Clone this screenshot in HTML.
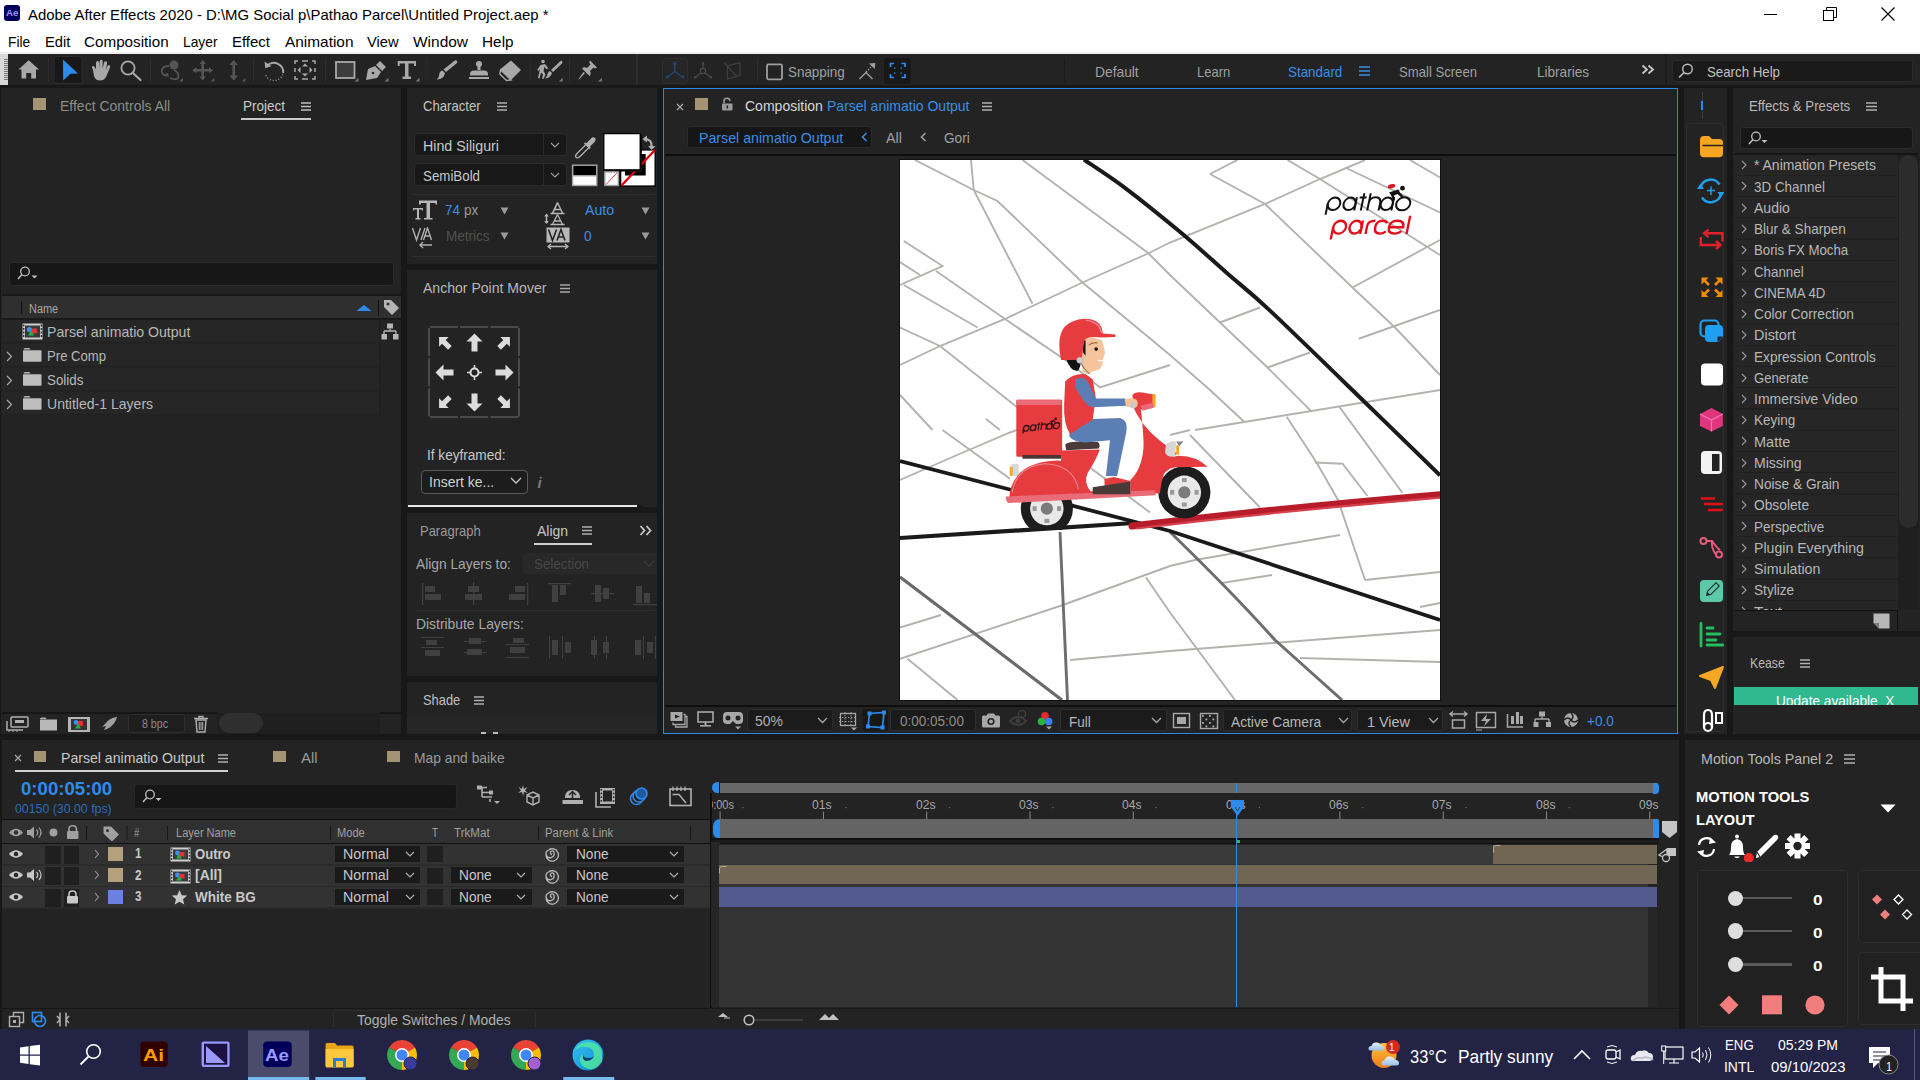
<!DOCTYPE html><html><head><meta charset="utf-8"><style>html,body{margin:0;padding:0;}body{width:1920px;height:1080px;position:relative;overflow:hidden;background:#181818;font-family:"Liberation Sans",sans-serif;}body>div,body>svg{position:absolute;}.t{white-space:nowrap;}</style></head><body>
<div style="left:0px;top:0px;width:1920px;height:54px;background:#ffffff;"></div>
<div style="left:0px;top:51.5px;width:1920px;height:2px;background:#f0f0f0;"></div>
<div style="left:4px;top:5px;width:16px;height:16px;background:#00005b;border-radius:3px;"></div>
<div class="t" style="left:5.5px;top:9.38px;font-size:9px;line-height:9px;color:#9999ff;font-weight:bold;transform:scaleX(1.0865);transform-origin:0 0;">Ae</div>
<div class="t" style="left:27.6px;top:7.10px;font-size:15px;line-height:15px;color:#000;transform:scaleX(0.9946);transform-origin:0 0;">Adobe After Effects 2020 - D:\MG Social p\Pathao Parcel\Untitled Project.aep *</div>
<div style="left:1764px;top:14px;width:13px;height:1px;background:#000;"></div>
<svg style="left:1820px;top:5px" width="18" height="18"><rect x="3.5" y="5.5" width="10" height="10" fill="none" stroke="#000" stroke-width="1"/><path d="M6.5 5.5V2.5h10v10h-3" fill="none" stroke="#000" stroke-width="1"/></svg>
<svg style="left:1880px;top:6px" width="16" height="16"><path d="M1.5 1.5l13 13M14.5 1.5l-13 13" stroke="#000" stroke-width="1.2"/></svg>
<div class="t" style="left:7.8px;top:35.23px;font-size:14.5px;line-height:14.5px;color:#000;transform:scaleX(0.9501);transform-origin:0 0;">File</div>
<div class="t" style="left:44.7px;top:35.23px;font-size:14.5px;line-height:14.5px;color:#000;transform:scaleX(1.0125);transform-origin:0 0;">Edit</div>
<div class="t" style="left:84px;top:35.23px;font-size:14.5px;line-height:14.5px;color:#000;transform:scaleX(1.0497);transform-origin:0 0;">Composition</div>
<div class="t" style="left:183px;top:35.23px;font-size:14.5px;line-height:14.5px;color:#000;transform:scaleX(0.9511);transform-origin:0 0;">Layer</div>
<div class="t" style="left:232px;top:35.23px;font-size:14.5px;line-height:14.5px;color:#000;transform:scaleX(1.0323);transform-origin:0 0;">Effect</div>
<div class="t" style="left:284.5px;top:35.23px;font-size:14.5px;line-height:14.5px;color:#000;transform:scaleX(1.0623);transform-origin:0 0;">Animation</div>
<div class="t" style="left:367px;top:35.23px;font-size:14.5px;line-height:14.5px;color:#000;transform:scaleX(1.0139);transform-origin:0 0;">View</div>
<div class="t" style="left:413px;top:35.23px;font-size:14.5px;line-height:14.5px;color:#000;transform:scaleX(1.0665);transform-origin:0 0;">Window</div>
<div class="t" style="left:482px;top:35.23px;font-size:14.5px;line-height:14.5px;color:#000;transform:scaleX(1.0596);transform-origin:0 0;">Help</div>
<div style="left:0px;top:54px;width:1920px;height:31px;background:#232323;"></div>
<svg style="left:0;top:54px" width="8" height="31"><rect width="8" height="31" fill="#d8d8d8"/><rect x="4" y="5" width="4" height="1" fill="#777"/><rect x="4" y="7" width="4" height="1" fill="#777"/><rect x="4" y="9" width="4" height="1" fill="#777"/><rect x="4" y="11" width="4" height="1" fill="#777"/><rect x="4" y="13" width="4" height="1" fill="#777"/><rect x="4" y="15" width="4" height="1" fill="#777"/><rect x="4" y="17" width="4" height="1" fill="#777"/><rect x="4" y="19" width="4" height="1" fill="#777"/><rect x="4" y="21" width="4" height="1" fill="#777"/><rect x="4" y="23" width="4" height="1" fill="#777"/><rect x="4" y="25" width="4" height="1" fill="#777"/></svg>
<svg style="left:0;top:54px" width="1000" height="31" viewBox="0 54 1000 31"><rect x="48" y="58" width="1" height="24" fill="#2c2c2c"/><rect x="150" y="58" width="1" height="24" fill="#2c2c2c"/><rect x="253" y="58" width="1" height="24" fill="#2c2c2c"/><rect x="325" y="58" width="1" height="24" fill="#2c2c2c"/><rect x="426.5" y="58" width="1" height="24" fill="#2c2c2c"/><rect x="529.6" y="58" width="1" height="24" fill="#2c2c2c"/><rect x="569" y="58" width="1" height="24" fill="#2c2c2c"/><rect x="757" y="58" width="1" height="24" fill="#2c2c2c"/><rect x="636" y="54" width="2" height="31" fill="#2e2e2e"/><rect x="54" y="56.5" width="28" height="27" rx="3" fill="#181818" stroke="#2c2c2c"/><path d="M63 59.5 L78 73.5 L70.5 73.8 L63.2 80.5Z" fill="#2d8ceb"/><path d="M28.7 60.2 L39 69.5 L36 69.5 L36 78.6 L31.2 78.6 L31.2 73 L26.2 73 L26.2 78.6 L21.5 78.6 L21.5 69.5 L18.5 69.5Z" fill="#a8a8a8"/><path d="M93 70 Q91 66 93 66 Q95 66 96 70 L96 63 Q96 61 97.5 61 Q99 61 99 63 L99 69 L99.5 61.5 Q100 59.5 101.5 59.8 Q103 60 102.8 62 L102.5 69 L104 62.5 Q104.5 61 106 61.3 Q107.5 61.8 107 63.5 L106 70 L107.5 66 Q108.5 64.5 109.8 65.5 Q110.5 66.5 109.8 68 L106 77 Q104 80.5 100 80.5 Q95.5 80.5 94 76Z" fill="#a8a8a8"/><circle cx="128" cy="68" r="6.6" fill="none" stroke="#a8a8a8" stroke-width="1.8"/><path d="M132.7 72.7 L140.5 80" stroke="#a8a8a8" stroke-width="2.2" stroke-linecap="round"/><circle cx="174" cy="65" r="4.5" fill="#555555"/><path d="M169 66 Q161 66 162 72 Q163 76 168 75.5 M174 70 Q180 73 178 78 Q176 80.5 170 78" fill="none" stroke="#555555" stroke-width="1.8"/><path d="M165 74 L169 77 L168 73Z" fill="#555555"/><path d="M179 81.6 L183 77.8 L183 81.6Z" fill="#555555"/><path d="M202.7 60 L206 64 L204 64 L204 69 L209 69 L209 67 L213 70.3 L209 73.6 L209 71.6 L204 71.6 L204 76.6 L206 76.6 L202.7 80.6 L199.4 76.6 L201.4 76.6 L201.4 71.6 L196.4 71.6 L196.4 73.6 L192.4 70.3 L196.4 67 L196.4 69 L201.4 69 L201.4 64 L199.4 64Z" fill="#555555"/><path d="M210.5 81.6 L214.4 77.8 L214.4 81.6Z" fill="#555555"/><path d="M233.7 60 L238 65 L235 65 L235 75.6 L238 75.6 L233.7 80.6 L229.4 75.6 L232.4 75.6 L232.4 65 L229.4 65Z" fill="#555555"/><path d="M241.6 81.6 L245.5 77.8 L245.5 81.6Z" fill="#555555"/><path d="M267.5 65.5 A9.3 9.3 0 0 1 283.2 73" fill="none" stroke="#a8a8a8" stroke-width="1.9"/><path d="M282.8 74.5 A9.3 9.3 0 0 1 265.2 74" fill="none" stroke="#a8a8a8" stroke-width="1.3" stroke-dasharray="0.9 2"/><path d="M264.5 61.5 L265.3 68.3 L271.5 66Z" fill="#a8a8a8"/><path d="M295 64 V61 H298 M302 61 H308 M312 61 H315 V64 M315 68 V72 M315 76 V79 H312 M308 79 H302 M298 79 H295 V76 M295 72 V68" fill="none" stroke="#a8a8a8" stroke-width="1.5"/><path d="M305 63.5 L308 66.5 L302 66.5Z M305 76.5 L308 73.5 L302 73.5Z M297.5 70 L300.5 67 L300.5 73Z M312.5 70 L309.5 67 L309.5 73Z" fill="#a8a8a8"/><rect x="336" y="62" width="18.5" height="16" fill="#3d3d3d" stroke="#a8a8a8" stroke-width="1.8"/><path d="M354.6 81.6 L358.5 77.8 L358.5 81.6Z" fill="#777"/><path d="M380 61 L386 67 L382 71 L376 65Z M375 66 L381 72 L377 78 L366 80 L368 69Z" fill="#a8a8a8"/><circle cx="373" cy="73" r="1.3" fill="#232323"/><path d="M384.6 81.6 L388.5 77.8 L388.5 81.6Z" fill="#777"/><path d="M397.7 61 H416 V66 H414 V63.5 H408.5 V76.5 H411 V79 H402.5 V76.5 H405 V63.5 H399.7 V66 H397.7Z" fill="#a8a8a8"/><path d="M415.6 81.6 L419.5 77.8 L419.5 81.6Z" fill="#777"/><path d="M456.5 60.5 Q458 61 457 63 L446 72 L443.5 69.5 L454.5 60.8Q455.5 60 456.5 60.5Z M442.5 70.5 L445 73 Q444 79 436.8 79.6 Q439.5 77 439.3 74 Q439.5 71 442.5 70.5Z" fill="#a8a8a8"/><circle cx="479" cy="64" r="3" fill="#a8a8a8"/><rect x="477.5" y="65" width="3" height="5" fill="#a8a8a8"/><path d="M470 74 Q470 70.5 474 70.5 H484 Q488 70.5 488 74 V75.5 H470Z" fill="#a8a8a8"/><rect x="469" y="77" width="20" height="2" fill="#a8a8a8"/><path d="M511 60.5 L521 70 L511 80 L500 69.5Z" fill="#a8a8a8"/><path d="M505.5 74.5 L511 80 L506.5 80.5 L499.8 74 L500.5 70Z" fill="#232323" stroke="#a8a8a8" stroke-width="1.4"/><circle cx="543" cy="61.5" r="1.8" fill="#a8a8a8"/><path d="M540.5 65 L545 64 L548.5 68.5 L546 69 L544.5 66.5 L543.5 71 L545.5 74.5 L543.5 79 L542 78.5 L543 74.5 L541 72.5 L539.5 78.5 L538 78 L540 69 L538.5 71 L537.2 70Z" fill="#a8a8a8"/><path d="M562 61 Q563 62 562 63.5 L553 72 L551 70 L560.5 61Q561.3 60.5 562 61Z M550 71 L552 73 Q550.5 78 545 78.5 Q547.5 76 547.5 74 Q548 71.5 550 71Z" fill="#a8a8a8"/><path d="M558.8 81.6 L562.7 77.8 L562.7 81.6Z" fill="#777"/><path d="M590 60.5 L597 67.5 L595 68.5 L593.5 67.5 L590 71 Q591.5 74 589.5 76 L582 68.5 Q584 66.5 587 68 L590.5 64.5 L589.2 62.5Z M585 73 L579 79.5 L578.5 79 L583.5 72Z" fill="#a8a8a8"/><path d="M598 81.6 L601.9 77.8 L601.9 81.6Z" fill="#777"/><rect x="662.5" y="58.5" width="25" height="25" rx="3" fill="#262626" stroke="#2e2e2e"/><path d="M674.8 62 L674.8 71.5 L667 77.5 M674.8 71.5 L683 77.5" fill="none" stroke="#1e4a73" stroke-width="1.5"/><path d="M672.5 64.5 L674.8 61.5 L677 64.5Z M666 75 L666 78.5 L669.5 78Z M684 75 L684 78.5 L680.5 78Z" fill="#1e4a73"/><circle cx="703" cy="71" r="2.6" fill="none" stroke="#4a4a4a" stroke-width="1.3"/><path d="M703 62 V68.5 M701 73 L695 77.5 M705 73 L711 77.5" stroke="#4a4a4a" stroke-width="1.3"/><path d="M701 64.5 L703 62 L705 64.5Z M694 75.5 L694 78.5 L697 78Z M712 75.5 L712 78.5 L709 78Z" fill="#4a4a4a"/><path d="M727.5 66 L740 62.5 L740 75.5 L727.5 79Z M724 62.5 L737 77" fill="none" stroke="#3e3e3e" stroke-width="1.3"/><rect x="767" y="64.3" width="15" height="15" rx="1.5" fill="none" stroke="#9e9e9e" stroke-width="1.8"/><path d="M859.5 79 L866 72.5 L872.5 79" fill="none" stroke="#a0a0a0" stroke-width="1.3"/><path d="M866 72 L873 65" stroke="#a0a0a0" stroke-width="1.2" stroke-dasharray="1.5 1.2"/><path d="M869 63.5 L875.3 63 L874.8 69Z" fill="#a0a0a0"/><rect x="884" y="58" width="26.5" height="26" rx="3" fill="#181818"/><path d="M890.5 67 V63.5 H894 M901.5 63.5 H905 V67 M905 74 V77.5 H901.5 M894 77.5 H890.5 V74" fill="none" stroke="#2d8ceb" stroke-width="1.7"/><path d="M894 67.5h1.3v1.3h-1.3z M900.5 67.5h1.3v1.3h-1.3z M894 72.5h1.3v1.3h-1.3z M900.5 72.5h1.3v1.3h-1.3z" fill="#2d8ceb"/></svg>
<div class="t" style="left:788.3px;top:64.30px;font-size:15px;line-height:15px;color:#a0a0a0;transform:scaleX(0.8944);transform-origin:0 0;">Snapping</div>
<div style="left:1064px;top:58px;width:1px;height:24px;background:#1b1b1b;"></div>
<div class="t" style="left:1094.7px;top:64.30px;font-size:15px;line-height:15px;color:#a0a0a0;transform:scaleX(0.9195);transform-origin:0 0;">Default</div>
<div class="t" style="left:1197.3px;top:64.30px;font-size:15px;line-height:15px;color:#a0a0a0;transform:scaleX(0.8653);transform-origin:0 0;">Learn</div>
<div class="t" style="left:1287.9px;top:64.30px;font-size:15px;line-height:15px;color:#3a8ee6;transform:scaleX(0.8919);transform-origin:0 0;">Standard</div>
<svg style="left:1359px;top:65px" width="12" height="12"><path d="M0 2h11M0 6h11M0 10h11" stroke="#3a8ee6" stroke-width="1.4"/></svg>
<div class="t" style="left:1399px;top:64.30px;font-size:15px;line-height:15px;color:#a0a0a0;transform:scaleX(0.8744);transform-origin:0 0;">Small Screen</div>
<div class="t" style="left:1537px;top:64.30px;font-size:15px;line-height:15px;color:#a0a0a0;transform:scaleX(0.9039);transform-origin:0 0;">Libraries</div>
<svg style="left:1641px;top:64px" width="15" height="12"><path d="M1.5 1.5L6 5.5L1.5 9.5M7.5 1.5L12 5.5L7.5 9.5" fill="none" stroke="#c8c8c8" stroke-width="1.8"/></svg>
<div style="left:1665px;top:54px;width:2px;height:31px;background:#1c1c1c;"></div>
<div style="left:1672px;top:60px;width:241px;height:22px;background:#1a1a1a;border:1px solid #2a2a2a;box-sizing:border-box;border-radius:3px;"></div>
<svg style="left:1677px;top:62px" width="18" height="18"><circle cx="10.5" cy="7" r="4.8" fill="none" stroke="#c0c0c0" stroke-width="1.4"/><path d="M7 10.5L2 15.5" stroke="#c0c0c0" stroke-width="1.6"/></svg>
<div class="t" style="left:1707px;top:64.30px;font-size:15px;line-height:15px;color:#c0c0c0;transform:scaleX(0.8843);transform-origin:0 0;">Search Help</div>
<div style="left:1px;top:88px;width:400px;height:646px;background:#232323;"></div>
<div style="left:33px;top:98px;width:13px;height:12px;background:#a39474;"></div>
<div class="t" style="left:59.5px;top:98.00px;font-size:15px;line-height:15px;color:#8c8c8c;transform:scaleX(0.9330);transform-origin:0 0;">Effect Controls All</div>
<div class="t" style="left:243.3px;top:98.00px;font-size:15px;line-height:15px;color:#cccccc;transform:scaleX(0.8996);transform-origin:0 0;">Project</div>
<svg style="left:300.8px;top:102px" width="10" height="9"><path d="M0 1h10M0 4.5h10M0 8h10" stroke="#c0c0c0" stroke-width="1.6"/></svg>
<div style="left:240.8px;top:118px;width:70px;height:2px;background:#c8c8c8;"></div>
<div style="left:9px;top:262px;width:385px;height:24px;background:#171717;border:1px solid #2a2a2a;box-sizing:border-box;border-radius:3px;"></div>
<svg style="left:16px;top:265px" width="26" height="18"><circle cx="9" cy="6.5" r="4.3" fill="none" stroke="#c0c0c0" stroke-width="1.3"/><path d="M6 9.5L2 14" stroke="#c0c0c0" stroke-width="1.5"/><path d="M15.5 10.5h6l-3 3z" fill="#c0c0c0"/></svg>
<div style="left:2px;top:294px;width:399px;height:2px;background:#1a1a1a;"></div>
<div style="left:2px;top:296px;width:399px;height:22px;background:#2f2f2f;"></div>
<div style="left:2px;top:318px;width:399px;height:1.5px;background:#1a1a1a;"></div>
<div style="left:21px;top:301px;width:1px;height:13px;background:#111;"></div>
<div class="t" style="left:29.3px;top:302.84px;font-size:12px;line-height:12px;color:#a8a8a8;transform:scaleX(0.9122);transform-origin:0 0;">Name</div>
<svg style="left:356px;top:304px" width="17" height="8"><path d="M0.5 7L8 1L15.5 7Z" fill="#2d8ceb"/></svg>
<div style="left:377.5px;top:300px;width:1px;height:16px;background:#111;"></div>
<svg style="left:383px;top:299px" width="17" height="17"><path d="M1 1h7l8 8-7 7-8-8z" fill="#b5b5b5"/><circle cx="5" cy="5" r="1.5" fill="#2f2f2f"/></svg>
<div style="left:2px;top:319.5px;width:377px;height:22.5px;background:#262626;"></div>
<div style="left:2px;top:342.0px;width:377px;height:1.3px;background:#212121;"></div>
<div style="left:2px;top:343.5px;width:377px;height:22.5px;background:#262626;"></div>
<div style="left:2px;top:366.0px;width:377px;height:1.3px;background:#212121;"></div>
<div style="left:2px;top:367.5px;width:377px;height:22.5px;background:#262626;"></div>
<div style="left:2px;top:390.0px;width:377px;height:1.3px;background:#212121;"></div>
<div style="left:2px;top:391.5px;width:377px;height:22.5px;background:#262626;"></div>
<div style="left:2px;top:414.0px;width:377px;height:1.3px;background:#212121;"></div>
<div style="left:378.6px;top:319px;width:1px;height:96px;background:#1e1e1e;"></div>
<svg style="left:21.8px;top:323px" width="21" height="17"><rect x="0.5" y="0.5" width="20" height="16" fill="#cfcfcf"/><rect x="3" y="2.5" width="15" height="12" fill="#3a3a3a"/><rect x="0.8" y="1.5" width="1.6" height="2" fill="#3a3a3a"/><rect x="18.6" y="1.5" width="1.6" height="2" fill="#3a3a3a"/><rect x="0.8" y="5.0" width="1.6" height="2" fill="#3a3a3a"/><rect x="18.6" y="5.0" width="1.6" height="2" fill="#3a3a3a"/><rect x="0.8" y="8.5" width="1.6" height="2" fill="#3a3a3a"/><rect x="18.6" y="8.5" width="1.6" height="2" fill="#3a3a3a"/><rect x="0.8" y="12.0" width="1.6" height="2" fill="#3a3a3a"/><rect x="18.6" y="12.0" width="1.6" height="2" fill="#3a3a3a"/><circle cx="7.5" cy="6.5" r="2.6" fill="#3d8ff0"/><rect x="9.5" y="5.5" width="5.5" height="5" fill="#e53030" transform="rotate(-10 12 8)"/><path d="M6 12.5L9 7.5L12 12.5Z" fill="#25b04a"/></svg>
<div class="t" style="left:47.4px;top:324.00px;font-size:15px;line-height:15px;color:#b8b8b8;transform:scaleX(0.9392);transform-origin:0 0;">Parsel animatio Output</div>
<svg style="left:381px;top:323px" width="18" height="17"><rect x="6" y="0.5" width="6" height="5" fill="#b5b5b5"/><path d="M9 5.5V8M3 8H15M3 8V11M15 8V11" stroke="#b5b5b5" stroke-width="1.3" fill="none"/><rect x="0.5" y="11" width="5.5" height="5.5" fill="#b5b5b5"/><rect x="12" y="11" width="5.5" height="5.5" fill="#b5b5b5"/></svg>
<svg style="left:5.5px;top:350.5px" width="7" height="11"><path d="M1 1L5.5 5.5L1 10" fill="none" stroke="#a8a8a8" stroke-width="1.2"/></svg>
<svg style="left:22.9px;top:346.8px" width="19" height="15"><path d="M0.5 2.5Q0.5 1 2 1H6.5L7.5 2.5H0.5Z" fill="#b5b5b5"/><rect x="0" y="3.2" width="18.5" height="11.5" rx="0.8" fill="#bdbdbd"/></svg>
<div class="t" style="left:47.4px;top:348.00px;font-size:15px;line-height:15px;color:#b8b8b8;transform:scaleX(0.8752);transform-origin:0 0;">Pre Comp</div>
<svg style="left:5.5px;top:374.5px" width="7" height="11"><path d="M1 1L5.5 5.5L1 10" fill="none" stroke="#a8a8a8" stroke-width="1.2"/></svg>
<svg style="left:22.9px;top:370.8px" width="19" height="15"><path d="M0.5 2.5Q0.5 1 2 1H6.5L7.5 2.5H0.5Z" fill="#b5b5b5"/><rect x="0" y="3.2" width="18.5" height="11.5" rx="0.8" fill="#bdbdbd"/></svg>
<div class="t" style="left:47.4px;top:372.00px;font-size:15px;line-height:15px;color:#b8b8b8;transform:scaleX(0.8885);transform-origin:0 0;">Solids</div>
<svg style="left:5.5px;top:398.5px" width="7" height="11"><path d="M1 1L5.5 5.5L1 10" fill="none" stroke="#a8a8a8" stroke-width="1.2"/></svg>
<svg style="left:22.9px;top:394.8px" width="19" height="15"><path d="M0.5 2.5Q0.5 1 2 1H6.5L7.5 2.5H0.5Z" fill="#b5b5b5"/><rect x="0" y="3.2" width="18.5" height="11.5" rx="0.8" fill="#bdbdbd"/></svg>
<div class="t" style="left:47.4px;top:396.00px;font-size:15px;line-height:15px;color:#b8b8b8;transform:scaleX(0.9357);transform-origin:0 0;">Untitled-1 Layers</div>
<div style="left:217px;top:713px;width:163px;height:21px;background:#1f1f1f;"></div>
<div style="left:2px;top:712px;width:215px;height:1.5px;background:#161616;"></div>
<div style="left:380px;top:712px;width:21px;height:1.5px;background:#161616;"></div>
<svg style="left:5px;top:715px" width="260" height="19"><rect x="6" y="2" width="17" height="10" rx="1" fill="none" stroke="#b0b0b0" stroke-width="1.5"/><rect x="10" y="5" width="9" height="3" fill="#b0b0b0"/><path d="M2 6V15H18" fill="none" stroke="#b0b0b0" stroke-width="1.5"/><path d="M3 16h2M7 16h2M11 16h2" stroke="#b0b0b0"/><path d="M35 4Q35 2.5 36.5 2.5H40.5L41.5 4Z" fill="#b0b0b0"/><rect x="35" y="4.5" width="17" height="11" fill="#b8b8b8"/><rect x="63" y="2" width="22" height="15" fill="#b5b5b5"/><rect x="66" y="4" width="16" height="11" fill="#333"/><circle cx="71" cy="7.5" r="2.4" fill="#3d8ff0"/><rect x="73" y="6" width="5" height="5" fill="#e53030"/><path d="M70 13.5L73 8.5L76 13.5Z" fill="#25b04a"/><path d="M112 2Q104 3 100 9L97 12L101 11L99 15Q107 13 111 5Z" fill="#a0a0a0"/></svg>
<div style="left:128px;top:714px;width:57px;height:19px;border:1px solid #2e2e2e;box-sizing:border-box;border-radius:3px;background:#1e1e1e"></div>
<div class="t" style="left:142px;top:718.34px;font-size:12px;line-height:12px;color:#8a8a8a;transform:scaleX(0.8857);transform-origin:0 0;">8 bpc</div>
<svg style="left:193px;top:715px" width="16" height="18"><path d="M1 3.5H15M6 3.5V1.5H10V3.5" fill="none" stroke="#b0b0b0" stroke-width="1.3"/><path d="M3 5H13L12 17H4Z" fill="none" stroke="#b0b0b0" stroke-width="1.4"/><path d="M6.3 7V15M8 7V15M9.7 7V15" stroke="#b0b0b0" stroke-width="1"/></svg>
<div style="left:218.6px;top:713px;width:44px;height:19.5px;border-radius:10px;background:#2f2f2f"></div>
<div style="left:407px;top:88px;width:250px;height:176px;background:#232323;"></div>
<div class="t" style="left:423.3px;top:98.30px;font-size:15px;line-height:15px;color:#c4c4c4;transform:scaleX(0.8746);transform-origin:0 0;">Character</div>
<svg style="left:497px;top:102px" width="10" height="9"><path d="M0 1h10M0 4.5h10M0 8h10" stroke="#b0b0b0" stroke-width="1.6"/></svg>
<div style="left:413.5px;top:133.3px;width:153px;height:23px;background:#181818;border:1px solid #2b2b2b;box-sizing:border-box;border-radius:4px;"></div>
<div style="left:543.0px;top:134.3px;width:1px;height:21px;background:#2b2b2b;"></div>
<svg style="left:549.5px;top:141.8px" width="10" height="6"><path d="M1 1L5 5L9 1" fill="none" stroke="#a0a0a0" stroke-width="1.1"/></svg>
<div class="t" style="left:423.3px;top:137.60px;font-size:15px;line-height:15px;color:#c8c8c8;transform:scaleX(0.9496);transform-origin:0 0;">Hind Siliguri</div>
<div style="left:413.5px;top:163.3px;width:153px;height:23px;background:#181818;border:1px solid #2b2b2b;box-sizing:border-box;border-radius:4px;"></div>
<div style="left:543.0px;top:164.3px;width:1px;height:21px;background:#2b2b2b;"></div>
<svg style="left:549.5px;top:171.8px" width="10" height="6"><path d="M1 1L5 5L9 1" fill="none" stroke="#a0a0a0" stroke-width="1.1"/></svg>
<div class="t" style="left:423.3px;top:167.60px;font-size:15px;line-height:15px;color:#c8c8c8;transform:scaleX(0.8879);transform-origin:0 0;">SemiBold</div>
<svg style="left:572px;top:135px" width="26" height="25"><path d="M14.5 9L5.5 18Q3.5 20 3.5 21.5Q4 23 5.5 22.8Q7 22.5 9 20.5L18 11.5" fill="none" stroke="#b0b0b0" stroke-width="1.3"/><path d="M12 8.5L12.8 7.5L14.5 8L19 3.5Q21.5 1.5 23 3Q24.5 4.5 22.5 7L18 11.5L18.5 13.3L17.5 14Z" fill="#b0b0b0"/></svg>
<svg style="left:571px;top:164px" width="28" height="23"><rect x="1.6" y="1.2" width="24.2" height="20.3" fill="#fff" stroke="#a8a8a8" stroke-width="1.4"/><rect x="2.3" y="1.9" width="22.8" height="9.2" fill="#000"/><rect x="2.3" y="11.1" width="22.8" height="1.3" fill="#9a9a9a"/></svg>
<svg style="left:600px;top:131px" width="60" height="58" viewBox="600 131 60 58"><rect x="620.6" y="149.9" width="34.6" height="36.2" fill="#fff" stroke="#000" stroke-width="1.4"/><rect x="625" y="154" width="20.7" height="21.5" fill="#000"/><rect x="629" y="158" width="12.4" height="13.2" fill="#fff"/><path d="M621.5 185.5L655 150" stroke="#e0000a" stroke-width="2.3"/><rect x="603.8" y="133.6" width="36.4" height="36.3" fill="#fff" stroke="#000" stroke-width="1.3"/><path d="M604.5 170.6H641V134.5" fill="none" stroke="#000" stroke-width="1.6"/><rect x="604.8" y="171.9" width="13.5" height="13.6" fill="#fff" stroke="#9c9c9c" stroke-width="1.4"/><path d="M606 184.5L617 172.8" stroke="#e0202a" stroke-width="0.9"/><path d="M651.5 146Q652 140 646 139" fill="none" stroke="#b0b0b0" stroke-width="2.2"/><path d="M642.5 139L647 135.5L647 142.5Z M648 146L655.5 146L651.7 150Z" fill="#b0b0b0"/></svg>
<div style="left:413px;top:193.5px;width:242px;height:1px;background:#2e2e2e;"></div>
<svg style="left:412px;top:200px" width="26" height="20"><path d="M7 0.5H25V4.5H23.5V3H18V18H20.5V19.5H12V18H14.5V3H9V4.5H7Z" fill="#b8b8b8"/><path d="M1 8H11V10.5H10V9.5H7V18H8.5V19.5H3.5V18H5V9.5H2V10.5H1Z" fill="#b8b8b8"/></svg>
<div class="t" style="left:444.6px;top:201.60px;font-size:15px;line-height:15px;color:#3a8ee6;transform:scaleX(0.8990);transform-origin:0 0;">74</div>
<div class="t" style="left:464px;top:201.60px;font-size:15px;line-height:15px;color:#9a9a9a;transform:scaleX(0.9026);transform-origin:0 0;">px</div>
<svg style="left:500px;top:206.5px" width="9" height="8"><path d="M0.5 0.5H8.5L4.5 7.5Z" fill="#9a9a9a"/></svg>
<svg style="left:641px;top:206.5px" width="9" height="8"><path d="M0.5 0.5H8.5L4.5 7.5Z" fill="#9a9a9a"/></svg>
<svg style="left:543px;top:201px" width="24" height="25"><path d="M14.5 1.5L9.5 12M14.5 1.5L19.5 12M11.3 8.5H17.7M9.5 12.8L14.5 2.3M14.5 13.5L9.5 23.5M14.5 13.5L19.5 23.5M11.3 20H17.7" fill="none" stroke="#b8b8b8" stroke-width="1.3"/><path d="M7.5 12.5H21.5M7.5 23.5H21.5" stroke="#b8b8b8" stroke-width="1.4"/><path d="M3.5 14V21.5" stroke="#b8b8b8" stroke-width="1.4"/><path d="M1.2 15.5L3.5 12.5L5.8 15.5ZM1.2 20L3.5 23L5.8 20Z" fill="#b8b8b8"/></svg>
<div class="t" style="left:584.8px;top:201.60px;font-size:15px;line-height:15px;color:#3a8ee6;transform:scaleX(0.9463);transform-origin:0 0;">Auto</div>
<svg style="left:412px;top:227px" width="24" height="22"><path d="M0.5 1L4.5 13L8.5 1M9 13L13 1M11.5 13L15.5 1L19.5 13M13 9H18" fill="none" stroke="#b0b0b0" stroke-width="1.4"/><path d="M8 18H20M11 15L8 18L11 21" fill="none" stroke="#b0b0b0" stroke-width="1.4"/></svg>
<div class="t" style="left:445.6px;top:227.70px;font-size:15px;line-height:15px;color:#505050;transform:scaleX(0.8979);transform-origin:0 0;">Metrics</div>
<svg style="left:500px;top:232px" width="9" height="8"><path d="M0.5 0.5H8.5L4.5 7.5Z" fill="#9a9a9a"/></svg>
<svg style="left:546px;top:227px" width="25" height="23"><rect x="0.5" y="0.5" width="23" height="15" fill="#b8b8b8"/><path d="M2.5 2.5L6.5 13.5L10.5 2.5M11 13.5L15 2.5L19 13.5M12.5 10H17.5" fill="none" stroke="#232323" stroke-width="1.6"/><path d="M2 19.5H22M5 17L2 19.5L5 22M19 17L22 19.5L19 22" fill="none" stroke="#b8b8b8" stroke-width="1.3"/></svg>
<div class="t" style="left:583.7px;top:227.70px;font-size:15px;line-height:15px;color:#3a8ee6;transform:scaleX(0.9110);transform-origin:0 0;">0</div>
<svg style="left:641px;top:232px" width="9" height="8"><path d="M0.5 0.5H8.5L4.5 7.5Z" fill="#9a9a9a"/></svg>
<div style="left:413px;top:256px;width:242px;height:1px;background:#2e2e2e;"></div>
<div style="left:407px;top:270px;width:250px;height:237px;background:#232323;"></div>
<div class="t" style="left:423.3px;top:279.90px;font-size:15px;line-height:15px;color:#b8b8b8;transform:scaleX(0.9368);transform-origin:0 0;">Anchor Point Mover</div>
<svg style="left:560.2px;top:284px" width="10" height="9"><path d="M0 1h10M0 4.5h10M0 8h10" stroke="#a8a8a8" stroke-width="1.6"/></svg>
<svg style="left:428px;top:326px" width="93" height="93"><path d="M2.0 1L30.0 1" stroke="#606060" stroke-width="1.3"/><path d="M2.0 91L30.0 91" stroke="#606060" stroke-width="1.3"/><path d="M1 2.0L1 30.0" stroke="#606060" stroke-width="1.3"/><path d="M91 2.0L91 30.0" stroke="#606060" stroke-width="1.3"/><path d="M32.2 1L60.2 1" stroke="#606060" stroke-width="1.3"/><path d="M32.2 91L60.2 91" stroke="#606060" stroke-width="1.3"/><path d="M1 32.2L1 60.2" stroke="#606060" stroke-width="1.3"/><path d="M91 32.2L91 60.2" stroke="#606060" stroke-width="1.3"/><path d="M62.4 1L90.4 1" stroke="#606060" stroke-width="1.3"/><path d="M62.4 91L90.4 91" stroke="#606060" stroke-width="1.3"/><path d="M1 62.4L1 90.4" stroke="#606060" stroke-width="1.3"/><path d="M91 62.4L91 90.4" stroke="#606060" stroke-width="1.3"/><g transform="translate(16.5 16.5) rotate(-45) scale(0.85)"><path d="M0 -9L8 -1H3V9H-3V-1H-8Z" fill="#dcdcdc"/></g><g transform="translate(46.5 16.5) rotate(0)"><path d="M0 -9L8 -1H3V9H-3V-1H-8Z" fill="#dcdcdc"/></g><g transform="translate(76.5 16.5) rotate(45) scale(0.85)"><path d="M0 -9L8 -1H3V9H-3V-1H-8Z" fill="#dcdcdc"/></g><g transform="translate(16.5 46.5) rotate(-90)"><path d="M0 -9L8 -1H3V9H-3V-1H-8Z" fill="#dcdcdc"/></g><g transform="translate(76.5 46.5) rotate(90)"><path d="M0 -9L8 -1H3V9H-3V-1H-8Z" fill="#dcdcdc"/></g><g transform="translate(16.5 76.5) rotate(-135) scale(0.85)"><path d="M0 -9L8 -1H3V9H-3V-1H-8Z" fill="#dcdcdc"/></g><g transform="translate(46.5 76.5) rotate(180)"><path d="M0 -9L8 -1H3V9H-3V-1H-8Z" fill="#dcdcdc"/></g><g transform="translate(76.5 76.5) rotate(135) scale(0.85)"><path d="M0 -9L8 -1H3V9H-3V-1H-8Z" fill="#dcdcdc"/></g><circle cx="46.5" cy="46.5" r="4" fill="none" stroke="#dcdcdc" stroke-width="2"/><path d="M46.5 39V42M46.5 51V54M39 46.5H42M51 46.5H54" stroke="#dcdcdc" stroke-width="1.6"/></svg>
<div class="t" style="left:426.8px;top:447.95px;font-size:14px;line-height:14px;color:#c8c8c8;transform:scaleX(0.9714);transform-origin:0 0;">If keyframed:</div>
<div style="left:421px;top:469.5px;width:107px;height:24px;background:#1c1c1c;border:1px solid #5a5a5a;box-sizing:border-box;border-radius:4px;"></div>
<div class="t" style="left:428.6px;top:474.30px;font-size:15px;line-height:15px;color:#d0d0d0;transform:scaleX(0.9311);transform-origin:0 0;">Insert ke...</div>
<svg style="left:510px;top:477px" width="12" height="8"><path d="M1 1L6 6L11 1" fill="none" stroke="#c8c8c8" stroke-width="1.3"/></svg>
<div class="t" style="left:537.5px;top:474.70px;font-size:15px;line-height:15px;color:#7a7a7a;font-weight:bold;font-style:italic;font-family:"Liberation Serif",serif;">i</div>
<div style="left:408px;top:504.5px;width:229px;height:2px;background:#e8e8e8;"></div>
<div style="left:637px;top:504.5px;width:6px;height:2px;background:#1a1a1a;"></div>
<div style="left:407px;top:513px;width:250px;height:162.5px;background:#232323;"></div>
<div class="t" style="left:419.7px;top:523.20px;font-size:15px;line-height:15px;color:#9a9a9a;transform:scaleX(0.8651);transform-origin:0 0;">Paragraph</div>
<div class="t" style="left:537.3px;top:523.20px;font-size:15px;line-height:15px;color:#c8c8c8;transform:scaleX(0.9294);transform-origin:0 0;">Align</div>
<svg style="left:582.2px;top:526px" width="10" height="9"><path d="M0 1h10M0 4.5h10M0 8h10" stroke="#b0b0b0" stroke-width="1.6"/></svg>
<div style="left:533.8px;top:542.8px;width:58.3px;height:2px;background:#d0d0d0;"></div>
<svg style="left:639px;top:525px" width="15" height="11"><path d="M1.5 1L5.5 5.5L1.5 10M7.5 1L11.5 5.5L7.5 10" fill="none" stroke="#c8c8c8" stroke-width="1.8"/></svg>
<div class="t" style="left:415.5px;top:556.05px;font-size:15px;line-height:15px;color:#a8a8a8;transform:scaleX(0.9179);transform-origin:0 0;">Align Layers to:</div>
<div style="left:523px;top:553px;width:134px;height:21px;background:#282828;border-radius:3px 0 0 3px;"></div>
<div class="t" style="left:533.6px;top:556.30px;font-size:15px;line-height:15px;color:#474747;transform:scaleX(0.8913);transform-origin:0 0;">Selection</div>
<svg style="left:643px;top:560px" width="12" height="8"><path d="M1 1L6 6L11 1" fill="none" stroke="#3a3a3a" stroke-width="1.3"/></svg>
<svg style="left:407px;top:580px" width="250" height="82"><rect x="15" y="3" width="1.2" height="22" fill="#404040"/><rect x="18" y="6" width="10" height="6" fill="#404040"/><rect x="18" y="14" width="16" height="6" fill="#404040"/><rect x="66" y="2" width="1.2" height="23" fill="#404040"/><rect x="61" y="6" width="11" height="6" fill="#404040"/><rect x="58" y="14" width="17" height="6" fill="#404040"/><rect x="120" y="3" width="1.2" height="22" fill="#404040"/><rect x="108" y="6" width="10" height="6" fill="#404040"/><rect x="102" y="14" width="16" height="6" fill="#404040"/><rect x="141" y="3" width="23" height="1.2" fill="#404040"/><rect x="145" y="5" width="6" height="17" fill="#404040"/><rect x="153" y="5" width="6" height="10" fill="#404040"/><rect x="184" y="13" width="23" height="1.2" fill="#404040"/><rect x="188" y="5" width="6" height="17" fill="#404040"/><rect x="196" y="8" width="6" height="11" fill="#404040"/><rect x="226" y="24" width="24" height="1.2" fill="#404040"/><rect x="229" y="6" width="6" height="17" fill="#404040"/><rect x="237" y="13" width="6" height="10" fill="#404040"/><rect x="14" y="57" width="23" height="1" fill="#404040"/><rect x="19" y="60" width="11" height="5" fill="#404040"/><rect x="14" y="67" width="23" height="1" fill="#404040"/><rect x="18" y="70" width="15" height="6" fill="#404040"/><rect x="57" y="61" width="23" height="1" fill="#404040"/><rect x="62" y="58" width="12" height="6" fill="#404040"/><rect x="57" y="72" width="23" height="1" fill="#404040"/><rect x="60" y="69" width="15" height="6" fill="#404040"/><rect x="106" y="58" width="11" height="5" fill="#404040"/><rect x="99" y="64" width="23" height="1" fill="#404040"/><rect x="103" y="67" width="15" height="6" fill="#404040"/><rect x="99" y="77" width="23" height="1" fill="#404040"/><rect x="142" y="56" width="1" height="23" fill="#404040"/><rect x="145" y="60" width="6" height="15" fill="#404040"/><rect x="155" y="56" width="1" height="23" fill="#404040"/><rect x="158" y="62" width="6" height="11" fill="#404040"/><rect x="187" y="56" width="1" height="23" fill="#404040"/><rect x="184" y="60" width="6" height="15" fill="#404040"/><rect x="199" y="56" width="1" height="23" fill="#404040"/><rect x="196" y="62" width="6" height="11" fill="#404040"/><rect x="236" y="56" width="1" height="23" fill="#404040"/><rect x="228" y="60" width="6" height="15" fill="#404040"/><rect x="248" y="56" width="1" height="23" fill="#404040"/><rect x="240" y="62" width="6" height="11" fill="#404040"/></svg>
<div style="left:415px;top:610px;width:240px;height:1px;background:#2e2e2e;"></div>
<div class="t" style="left:415.5px;top:616.30px;font-size:15px;line-height:15px;color:#a8a8a8;transform:scaleX(0.9245);transform-origin:0 0;">Distribute Layers:</div>
<div style="left:407px;top:682px;width:250px;height:51.5px;background:#232323;"></div>
<div style="left:407px;top:716.6px;width:250px;height:16.9px;background:#262626;"></div>
<div style="left:481px;top:732px;width:5px;height:1.5px;background:#bbbbbb;"></div>
<div style="left:493px;top:732px;width:5px;height:1.5px;background:#bbbbbb;"></div>
<div class="t" style="left:423px;top:692.20px;font-size:15px;line-height:15px;color:#c0c0c0;transform:scaleX(0.8576);transform-origin:0 0;">Shade</div>
<svg style="left:474px;top:696px" width="10" height="9"><path d="M0 1h10M0 4.5h10M0 8h10" stroke="#b0b0b0" stroke-width="1.6"/></svg>
<div style="left:663px;top:88px;width:1015px;height:646px;background:#232323;"></div>
<div style="left:663px;top:88px;width:1015px;height:646px;border:1.6px solid #2b88e8;box-sizing:border-box;"></div>
<svg style="left:676px;top:103px" width="8" height="8"><path d="M1 1L7 7M7 1L1 7" stroke="#a8a8a8" stroke-width="1.2"/></svg>
<div style="left:695px;top:98px;width:13px;height:12px;background:#a39474;"></div>
<svg style="left:721px;top:97px" width="12" height="14"><path d="M3 6.5V4Q3 1.3 6 1.3Q8.7 1.3 9 4" fill="none" stroke="#9a9a9a" stroke-width="1.6"/><rect x="1" y="6.5" width="10.5" height="7" rx="1" fill="#9a9a9a"/><rect x="5.5" y="8.5" width="1.6" height="3" fill="#232323"/></svg>
<div class="t" style="left:744.5px;top:98.10px;font-size:15px;line-height:15px;color:#d8d8d8;transform:scaleX(0.9343);transform-origin:0 0;">Composition</div>
<div class="t" style="left:826.5px;top:98.10px;font-size:15px;line-height:15px;color:#3a8ee6;transform:scaleX(0.9339);transform-origin:0 0;">Parsel animatio Output</div>
<svg style="left:982px;top:102px" width="10" height="9"><path d="M0 1h10M0 4.5h10M0 8h10" stroke="#b0b0b0" stroke-width="1.6"/></svg>
<div style="left:687.4px;top:126.4px;width:184.6px;height:21.2px;background:#161616;border:1px solid #2a2a2a;box-sizing:border-box;border-radius:3px;"></div>
<div class="t" style="left:699.3px;top:130.00px;font-size:15px;line-height:15px;color:#3a8ee6;transform:scaleX(0.9457);transform-origin:0 0;">Parsel animatio Output</div>
<svg style="left:861px;top:132px" width="7" height="10"><path d="M5.5 1L1.5 5L5.5 9" fill="none" stroke="#3a8ee6" stroke-width="1.5"/></svg>
<div class="t" style="left:885.8px;top:130.00px;font-size:15px;line-height:15px;color:#a0a0a0;transform:scaleX(0.9537);transform-origin:0 0;">All</div>
<svg style="left:920px;top:132px" width="7" height="10"><path d="M5.5 1L1.5 5L5.5 9" fill="none" stroke="#a0a0a0" stroke-width="1.5"/></svg>
<div class="t" style="left:944.2px;top:130.00px;font-size:15px;line-height:15px;color:#a0a0a0;transform:scaleX(0.9069);transform-origin:0 0;">Gori</div>
<div style="left:665px;top:154px;width:1011px;height:1.5px;background:#0e0e0e;"></div>
<div style="left:665px;top:705px;width:1011px;height:1.6px;background:#0e0e0e;"></div>
<div style="left:899px;top:159px;width:542px;height:542px;background:#111"></div>
<svg style="left:900px;top:160px" width="540" height="540" viewBox="0 0 540 540"><rect width="540" height="540" fill="#fff"/><path d="M15 0 L73.75 30 L97.5 41 L182.5 122.5 L270 195 L310 230 L345 262.5" fill="none" stroke="#b2b3af" stroke-width="1.9"/><path d="M71 0 L73.75 30 L132.5 143.75" fill="none" stroke="#b2b3af" stroke-width="1.9"/><path d="M122.5 0 L247.5 92.5 L270 115 L320 162.5 L367.5 207.5 L410.6 250.6" fill="none" stroke="#b2b3af" stroke-width="1.9"/><path d="M3.75 81 L42.5 106 L0 125" fill="none" stroke="#b2b3af" stroke-width="1.9"/><path d="M0 102 L20 115" fill="none" stroke="#b2b3af" stroke-width="1.9"/><path d="M36 111 L105 159 L172.5 205 L200 227.5 L270 205" fill="none" stroke="#b2b3af" stroke-width="1.9"/><path d="M3.75 125 L77.5 167.5" fill="none" stroke="#b2b3af" stroke-width="1.9"/><path d="M0 205 L40 186 L105 159 L182.5 122.5 L247.5 93.75 L270 82.5 L365 44 L420 19 L465 0" fill="none" stroke="#b2b3af" stroke-width="1.9"/><path d="M0 167.5 L40 186 L117.5 247.5" fill="none" stroke="#b2b3af" stroke-width="1.9"/><path d="M0 235 L32.5 270" fill="none" stroke="#b2b3af" stroke-width="1.9"/><path d="M86 259 L100 270" fill="none" stroke="#b2b3af" stroke-width="1.9"/><path d="M310 14 L337.5 0" fill="none" stroke="#b2b3af" stroke-width="1.9"/><path d="M310 14 L365 44 L452.5 127.5 L495 167.5 L540 215" fill="none" stroke="#b2b3af" stroke-width="1.9"/><path d="M387.5 0 L420 19 L540 95" fill="none" stroke="#b2b3af" stroke-width="1.9"/><path d="M445 7.5 L540 52.5" fill="none" stroke="#b2b3af" stroke-width="1.9"/><path d="M510 0 L540 17.5" fill="none" stroke="#b2b3af" stroke-width="1.9"/><path d="M452.5 127.5 L540 80" fill="none" stroke="#b2b3af" stroke-width="1.9"/><path d="M320 162.5 L360 147.5" fill="none" stroke="#b2b3af" stroke-width="1.9"/><path d="M367.5 207.5 L410 192.5" fill="none" stroke="#b2b3af" stroke-width="1.9"/><path d="M458.75 178.75 L540 150" fill="none" stroke="#b2b3af" stroke-width="1.9"/><path d="M295 270 L540 230" fill="none" stroke="#b2b3af" stroke-width="1.9"/><path d="M439.2 246.6 L502.3 332.7" fill="none" stroke="#b2b3af" stroke-width="1.9"/><path d="M0 320 L60 293.75 L110 272.5 L130 265" fill="none" stroke="#b2b3af" stroke-width="1.9"/><path d="M42.5 270 L110 318.75" fill="none" stroke="#b2b3af" stroke-width="1.9"/><path d="M0 467.5 L41 455" fill="none" stroke="#b2b3af" stroke-width="1.9"/><path d="M0 498.75 L160 446 L270 406 L295 400 L440 375" fill="none" stroke="#b2b3af" stroke-width="1.9"/><path d="M7.5 498.75 L57.5 540" fill="none" stroke="#b2b3af" stroke-width="1.9"/><path d="M170 500 L270 491 L540 470" fill="none" stroke="#b2b3af" stroke-width="1.9"/><path d="M246 417.5 L270 452.5 L335 540" fill="none" stroke="#b2b3af" stroke-width="1.9"/><path d="M190 307.5 L250 352.5" fill="none" stroke="#b2b3af" stroke-width="1.9"/><path d="M270 275 L290 270" fill="none" stroke="#b2b3af" stroke-width="1.9"/><path d="M290 275 L360 347.5" fill="none" stroke="#b2b3af" stroke-width="1.9"/><path d="M386.7 256.7 L416.7 302.8 L438 340 L465 420" fill="none" stroke="#b2b3af" stroke-width="1.9"/><path d="M415 302.5 L442.5 303.75 L467.5 336" fill="none" stroke="#b2b3af" stroke-width="1.9"/><path d="M465 420 L540 412" fill="none" stroke="#b2b3af" stroke-width="1.9"/><path d="M322 423 L372 415" fill="none" stroke="#b2b3af" stroke-width="1.9"/><path d="M400 498 L540 502" fill="none" stroke="#b2b3af" stroke-width="1.9"/><path d="M520 447 L540 443" fill="none" stroke="#b2b3af" stroke-width="1.9"/><path d="M160 372 L167.5 540" stroke="#6e6e6e" stroke-width="2.9" fill="none"/><path d="M0 417 L162 540" stroke="#6a6a6a" stroke-width="3.2" fill="none"/><path d="M270 372 Q330 430 375 480 L442 540" stroke="#6e6e6e" stroke-width="3" fill="none"/><path d="M183.9 -0.4 C192.8 5.6 209.4 16.1 225.6 28.3 C241.8 40.5 264.1 58.6 281.1 72.8 C298.1 87.0 312.6 100.5 327.4 113.5 C342.2 126.5 347.5 129.5 370 150.6 C392.5 171.7 434.3 212.5 462.6 240 C490.9 267.5 523.8 299.6 540 315.4" stroke="#1a1a1a" stroke-width="4" fill="none"/><path d="M0 301 L270 371 L540 460" stroke="#1a1a1a" stroke-width="3.8" fill="none"/><path d="M0 378 L234 363" stroke="#1a1a1a" stroke-width="4.2" fill="none"/><path d="M232 366 Q380 348 542 334.5" stroke="#b81c2a" stroke-width="7" fill="none" stroke-linecap="round"/><path d="M236 368.5 Q380 351 542 337.5" stroke="#d4404c" stroke-width="2.2" fill="none"/></svg>
<svg style="left:1000px;top:310px" width="220" height="220" viewBox="0 0 1080 1080"><circle cx="230" cy="975" r="128" fill="#1d1d1d"/><circle cx="230" cy="975" r="82" fill="#e9e9e9"/><circle cx="230" cy="975" r="30" fill="#7b7b7b"/><rect x="218" y="905" width="24" height="20" fill="#9a9a9a" transform="rotate(0 230 975)"/><rect x="218" y="905" width="24" height="20" fill="#9a9a9a" transform="rotate(90 230 975)"/><rect x="218" y="905" width="24" height="20" fill="#9a9a9a" transform="rotate(180 230 975)"/><rect x="218" y="905" width="24" height="20" fill="#9a9a9a" transform="rotate(270 230 975)"/><circle cx="905" cy="895" r="128" fill="#1d1d1d"/><circle cx="905" cy="895" r="82" fill="#e9e9e9"/><circle cx="905" cy="895" r="30" fill="#7b7b7b"/><rect x="893" y="825" width="24" height="20" fill="#9a9a9a" transform="rotate(0 905 895)"/><rect x="893" y="825" width="24" height="20" fill="#9a9a9a" transform="rotate(90 905 895)"/><rect x="893" y="825" width="24" height="20" fill="#9a9a9a" transform="rotate(180 905 895)"/><rect x="893" y="825" width="24" height="20" fill="#9a9a9a" transform="rotate(270 905 895)"/><rect x="80" y="440" width="225" height="280" rx="6" fill="#e63c40"/><rect x="82" y="440" width="220" height="26" rx="6" fill="#ea6b78"/><rect x="110" y="712" width="190" height="18" fill="#4a3533"/><rect x="52" y="755" width="40" height="60" rx="14" fill="#d8d8d8"/><rect x="48" y="770" width="14" height="45" rx="6" fill="#f5a623"/><path d="M320 660 Q330 645 400 645 L480 648 Q495 660 485 680 L325 688Z" fill="#4a3a38"/><path d="M45 925 Q50 820 140 770 Q220 735 300 740 L300 690 L490 685 Q470 740 430 800 Q410 850 445 890 L640 890 L640 905 L40 940Z" fill="#e63c40"/><path d="M645 455 Q690 570 790 645 L870 705 Q800 760 785 900 L640 905 L640 835 Q705 770 705 650 Q700 560 692 490Z" fill="#e63c40"/><path d="M30 915 L760 885 L765 910 L40 948 Q25 935 30 915Z" fill="#ea6b78"/><path d="M60 895 Q80 770 220 755 Q360 760 385 880" fill="none" stroke="#f08a93" stroke-width="5"/><path d="M760 800 Q800 720 880 715 Q960 715 1020 770 L860 772 Q810 780 790 830Z" fill="#e63c40"/><path d="M815 660 Q835 640 865 645 L860 720 Q820 725 810 700Z" fill="#d6d6d6"/><rect x="865" y="665" width="14" height="45" fill="#f5a623"/><path d="M865 645L900 645L880 670Z" fill="#888"/><path d="M650 420 Q660 400 700 405 L752 415 L758 470 L700 490 Q660 485 655 460Z" fill="#e63c40"/><rect x="748" y="412" width="16" height="65" rx="5" fill="#f5a623"/><path d="M690 470 L750 455 L755 480 L700 495Z" fill="#ea6b78"/><path d="M345 570 Q380 540 460 535 L590 530 Q630 540 620 600 L575 815 L520 815 L540 640 L420 650 Q360 650 340 620Z" fill="#5b7fb4"/><path d="M512 830 L560 820 L640 840 L640 880 L515 880Z" fill="#e63c40"/><path d="M455 870 L640 842 L640 905 L455 905Z" fill="#4a3a38"/><path d="M320 350 Q360 310 420 315 L455 340 L470 430 L455 540 Q400 570 345 610 Q310 560 315 460Z" fill="#e63c40"/><path d="M370 340 Q405 320 430 350 L470 435 L615 435 L620 470 L455 478 Q420 470 395 420 Q360 380 370 340Z" fill="#5b7fb4"/><path d="M612 440 Q640 425 670 440 Q685 465 665 480 L620 475Z" fill="#f6c49c"/><circle cx="652" cy="467" r="14" fill="#c9c9c9"/><path d="M400 150 Q440 120 500 150 Q515 190 515 215 L505 240 Q510 260 490 290 Q450 310 410 300 L395 240Z" fill="#f6c49c"/><path d="M325 240 Q345 300 380 300 Q400 280 395 240Z" fill="#111"/><path d="M400 145 Q395 200 420 225 L420 150Z" fill="#111"/><path d="M400 240 L405 300 Q420 320 440 312 L470 290Z" fill="#f6c49c"/><circle cx="472" cy="192" r="9" fill="#111"/><path d="M436 172 Q455 158 478 162" stroke="#8a5a3a" stroke-width="5" fill="none"/><path d="M480 245 Q495 255 510 245" stroke="#fff" stroke-width="6" fill="none"/><path d="M395 255 Q410 290 440 315" stroke="#444" stroke-width="4" fill="none"/><path d="M300 245 Q275 130 320 80 Q370 35 445 45 Q500 55 505 115 L568 120 L566 132 L495 135 Q440 128 415 145 L400 245Z" fill="#e63c40"/><path d="M420 50 Q490 60 498 112" fill="none" stroke="#f08a93" stroke-width="6"/><circle cx="392" cy="247" r="15" fill="#cfcfcf" stroke="#b0b0b0" stroke-width="3"/></svg>
<svg style="left:1300px;top:170px" width="130" height="80" viewBox="1300 170 130 80"><g transform="translate(42.85 0) skewX(-11.5)" fill="none" stroke="#111" stroke-width="2.0"><ellipse cx="1332.6" cy="203.8" rx="6.2" ry="6.3"/><path d="M1326.4 203.5V214.8"/><ellipse cx="1348.2" cy="203.8" rx="6" ry="6.3"/><path d="M1354.2 197.2V210.6"/><path d="M1360.8 193.2V210.6M1357 197.6H1364"/><path d="M1367.2 193.2V210.6M1367.2 203Q1367.2 197.2 1373 197.2Q1378.6 197.2 1378.6 203V210.6"/><ellipse cx="1385.4" cy="203.8" rx="6" ry="6.3"/><path d="M1391.4 197.2V210.6"/><ellipse cx="1401.8" cy="203.8" rx="7" ry="6.5"/></g><ellipse cx="1391.5" cy="186.3" rx="3.8" ry="2" fill="#e1101a" transform="rotate(-15 1391.5 186.3)"/><circle cx="1402.5" cy="188.2" r="2.4" fill="#111"/><path d="M1389 192.5L1398 189.5Q1400 190 1399.5 192L1404 197L1402 198L1397.5 194L1394 195.5L1395 200L1393 200.5L1391 195Z" fill="#111"/><g transform="translate(47.61 0) skewX(-11.5)" fill="none" stroke="#e1101a" stroke-width="2.4"><ellipse cx="1338.2" cy="227.2" rx="6.4" ry="6.4"/><path d="M1331.8 227V239.5"/><ellipse cx="1354.2" cy="227.2" rx="6" ry="6.4"/><path d="M1360.2 220.6V234"/><path d="M1365.5 234V226Q1365.5 220.8 1372.8 220.8"/><path d="M1385.2 223Q1383 220.8 1380 220.8Q1373.8 220.8 1373.8 227.2Q1373.8 233.6 1380 233.6Q1383 233.6 1385.2 231.4"/><path d="M1387.6 227.2H1401.8Q1401.8 220.8 1394.7 220.8Q1387.6 220.8 1387.6 227.2Q1387.6 233.6 1394.7 233.6Q1398.5 233.6 1400.8 231.2"/><path d="M1406.5 215.8V234"/></g></svg>
<svg style="left:1010px;top:405px" width="60" height="40" viewBox="1010 405 60 40"><g transform="translate(1021.4 424) rotate(-5) scale(0.44) translate(-1324 -193)"><g transform="translate(42.85 0) skewX(-11.5)" fill="none" stroke="#3b1214" stroke-width="3"><ellipse cx="1332.6" cy="203.8" rx="6.2" ry="6.3"/><path d="M1326.4 203.5V214.8"/><ellipse cx="1348.2" cy="203.8" rx="6" ry="6.3"/><path d="M1354.2 197.2V210.6"/><path d="M1360.8 193.2V210.6M1357 197.6H1364"/><path d="M1367.2 193.2V210.6M1367.2 203Q1367.2 197.2 1373 197.2Q1378.6 197.2 1378.6 203V210.6"/><ellipse cx="1385.4" cy="203.8" rx="6" ry="6.3"/><path d="M1391.4 197.2V210.6"/><ellipse cx="1401.8" cy="203.8" rx="7" ry="6.5"/></g><circle cx="1402.5" cy="188.2" r="3" fill="#3b1214"/><path d="M1389 192.5L1398 189.5Q1400 190 1399.5 192L1404 197L1402 198L1397.5 194L1394 195.5L1395 200L1393 200.5L1391 195Z" fill="#3b1214"/></g></svg>
<svg style="left:665px;top:706px" width="1010" height="27" viewBox="665 706 1010 27"><rect x="670.5" y="712" width="12" height="9" fill="#a8a8a8"/><path d="M673 722.5V724.5H685V714.5H683.5M675.5 725.5V727H687V716.5H685.5" fill="none" stroke="#a8a8a8" stroke-width="1.3"/><path d="M675 714.5L680 716.5L675 718.5Z" fill="#232323"/><rect x="698" y="712" width="15" height="10" fill="none" stroke="#a8a8a8" stroke-width="1.6"/><rect x="704.5" y="722" width="2" height="3" fill="#a8a8a8"/><rect x="700" y="725" width="11" height="1.6" fill="#a8a8a8"/><path d="M723 716Q723 712 727 712H739Q743 712 743 716V720Q743 724 739 724H736L733 721L730 724H727Q723 724 723 720Z" fill="#a8a8a8"/><circle cx="728" cy="718" r="2.5" fill="#232323"/><circle cx="738" cy="718" r="2.5" fill="#232323"/><path d="M735 726.5H741L738 729.5Z" fill="#a8a8a8"/><rect x="840.5" y="713.5" width="15" height="12" fill="none" stroke="#a8a8a8" stroke-width="1.3"/><path d="M839 717.5H857M839 721.5H857M845 712V727M851 712V727" stroke="#a8a8a8" stroke-width="0.9" stroke-dasharray="1.5 1.5"/><path d="M851 727.5H857L854 730.5Z" fill="#a8a8a8"/><rect x="862.7" y="709" width="25.5" height="22" rx="3" fill="#181818"/><path d="M869.5 713.5L884 712.5L882.5 727.5L868 726.5Z" fill="none" stroke="#2d8ceb" stroke-width="1.7"/><rect x="867.5" y="711.5" width="4" height="4" fill="#2d8ceb"/><rect x="882" y="710.5" width="4" height="4" fill="#2d8ceb"/><rect x="880.5" y="725.5" width="4" height="4" fill="#2d8ceb"/><rect x="866" y="724.5" width="4" height="4" fill="#2d8ceb"/><path d="M982 717Q982 715.5 983.5 715.5H986.5L988 713.5H994L995.5 715.5H998.5Q1000 715.5 1000 717V726Q1000 727.5 998.5 727.5H983.5Q982 727.5 982 726Z" fill="#a8a8a8"/><circle cx="991" cy="721.5" r="3.6" fill="#232323"/><circle cx="991" cy="721.5" r="2" fill="#a8a8a8"/><path d="M1010 721Q1018 713 1026 721Q1018 729 1010 721Z" fill="none" stroke="#3e3e3e" stroke-width="1.8"/><circle cx="1018" cy="721" r="2.5" fill="#3e3e3e"/><circle cx="1022" cy="714" r="3.5" fill="none" stroke="#3e3e3e" stroke-width="1.5"/><circle cx="1045" cy="715.8" r="3.8" fill="#e8262c"/><circle cx="1041.5" cy="721.5" r="3.8" fill="#28b34a"/><circle cx="1048.7" cy="721.5" r="3.8" fill="#3d7ff0"/><path d="M1046 726.5H1052L1049 729.5Z" fill="#a8a8a8"/><rect x="1173.5" y="713.5" width="16" height="14" fill="none" stroke="#a8a8a8" stroke-width="1.4"/><rect x="1177" y="717" width="9" height="7" fill="#a8a8a8"/><rect x="1200.5" y="713.5" width="17" height="15" fill="none" stroke="#a8a8a8" stroke-width="1.4"/><rect x="1202.0" y="715.0" width="1.8" height="1.8" fill="#a8a8a8"/><rect x="1202.0" y="722.0" width="1.8" height="1.8" fill="#a8a8a8"/><rect x="1205.5" y="718.5" width="1.8" height="1.8" fill="#a8a8a8"/><rect x="1205.5" y="725.5" width="1.8" height="1.8" fill="#a8a8a8"/><rect x="1209.0" y="715.0" width="1.8" height="1.8" fill="#a8a8a8"/><rect x="1209.0" y="722.0" width="1.8" height="1.8" fill="#a8a8a8"/><rect x="1212.5" y="718.5" width="1.8" height="1.8" fill="#a8a8a8"/><rect x="1212.5" y="725.5" width="1.8" height="1.8" fill="#a8a8a8"/><path d="M1450 714H1467M1453 711.5L1450 714L1453 716.5M1464 711.5L1467 714L1464 716.5" fill="none" stroke="#a8a8a8" stroke-width="1.5"/><rect x="1452.5" y="720" width="12" height="8" fill="none" stroke="#a8a8a8" stroke-width="1.5"/><rect x="1476.5" y="712.5" width="19" height="15" fill="none" stroke="#a8a8a8" stroke-width="1.5"/><path d="M1487 714L1481 721H1486L1484 726L1491 719H1486Z" fill="#a8a8a8"/><path d="M1476 730H1482" stroke="#a8a8a8"/><path d="M1507.5 714V727H1523" fill="none" stroke="#a8a8a8" stroke-width="1.5"/><rect x="1511" y="716" width="3" height="8" fill="#a8a8a8"/><rect x="1516" y="712" width="3" height="12" fill="#a8a8a8"/><rect x="1520" y="716" width="3" height="8" fill="#a8a8a8"/><rect x="1539" y="711.5" width="6" height="5" fill="#a8a8a8"/><path d="M1542 716.5V719M1535 719H1549M1535 719V722M1549 719V722" stroke="#a8a8a8" stroke-width="1.4" fill="none"/><rect x="1533.5" y="722" width="5" height="5" fill="#a8a8a8"/><rect x="1546" y="722" width="5" height="5" fill="#a8a8a8"/><circle cx="1571" cy="720" r="7" fill="#a8a8a8"/><path d="M1571 713Q1575 717 1571 720Q1567 723 1571 727M1564 720Q1568 716 1571 720Q1574 724 1578 720" fill="none" stroke="#232323" stroke-width="1.5"/></svg>
<div style="left:747.3px;top:709px;width:86.1px;height:22px;background:#1b1b1b;border:1px solid #2c2c2c;box-sizing:border-box;border-radius:3px;"></div>
<div class="t" style="left:755.4px;top:713.30px;font-size:15px;line-height:15px;color:#b0b0b0;transform:scaleX(0.9293);transform-origin:0 0;">50%</div>
<svg style="left:817px;top:717px" width="11" height="7"><path d="M1 1L5.5 5.5L10 1" fill="none" stroke="#a8a8a8" stroke-width="1.3"/></svg>
<div style="left:890.4px;top:709px;width:85.3px;height:22px;background:#1b1b1b;border:1px solid #2c2c2c;box-sizing:border-box;border-radius:3px;"></div>
<div class="t" style="left:900.4px;top:713.30px;font-size:15px;line-height:15px;color:#8e8e8e;transform:scaleX(0.9013);transform-origin:0 0;">0:00:05:00</div>
<div style="left:1060.3px;top:709px;width:106.5px;height:22px;background:#1b1b1b;border:1px solid #2c2c2c;box-sizing:border-box;border-radius:3px;"></div>
<div class="t" style="left:1069.2px;top:713.80px;font-size:15px;line-height:15px;color:#b8b8b8;transform:scaleX(0.9019);transform-origin:0 0;">Full</div>
<svg style="left:1151px;top:717px" width="11" height="7"><path d="M1 1L5.5 5.5L10 1" fill="none" stroke="#a8a8a8" stroke-width="1.3"/></svg>
<div style="left:1223.3px;top:709px;width:128.7px;height:22px;background:#1b1b1b;border:1px solid #2c2c2c;box-sizing:border-box;border-radius:3px;"></div>
<div class="t" style="left:1231.4px;top:713.80px;font-size:15px;line-height:15px;color:#b8b8b8;transform:scaleX(0.9160);transform-origin:0 0;">Active Camera</div>
<svg style="left:1338px;top:717px" width="11" height="7"><path d="M1 1L5.5 5.5L10 1" fill="none" stroke="#a8a8a8" stroke-width="1.3"/></svg>
<div style="left:1357.4px;top:709px;width:85.9px;height:22px;background:#1b1b1b;border:1px solid #2c2c2c;box-sizing:border-box;border-radius:3px;"></div>
<div class="t" style="left:1367px;top:713.80px;font-size:15px;line-height:15px;color:#b8b8b8;transform:scaleX(0.9608);transform-origin:0 0;">1 View</div>
<svg style="left:1428px;top:717px" width="11" height="7"><path d="M1 1L5.5 5.5L10 1" fill="none" stroke="#a8a8a8" stroke-width="1.3"/></svg>
<div class="t" style="left:1587px;top:713.30px;font-size:15px;line-height:15px;color:#3a8ee6;transform:scaleX(0.9084);transform-origin:0 0;">+0.0</div>
<div style="left:1684px;top:88px;width:43px;height:646px;background:#232323;"></div>
<div style="left:1702px;top:92px;width:1px;height:27px;background:#3a3a3a;"></div>
<div style="left:1701px;top:101px;width:1.5px;height:9px;background:#2d8ceb;"></div>
<div style="left:1685.8px;top:123px;width:38.5px;height:609px;border:1px solid #2c2c2c;border-bottom:none;box-sizing:border-box;border-radius:5px 5px 0 0;"></div>
<div style="left:1685.8px;top:700px;width:38.5px;height:32px;border:1px solid #2c2c2c;border-top:none;box-sizing:border-box;border-radius:0 0 5px 5px;"></div>
<svg style="left:1686px;top:123px" width="38" height="610" viewBox="1686 123 38 610"><path d="M1700 140Q1700 136 1704 136H1709L1712 139H1719Q1723 139 1723 143V153Q1723 157.3 1719 157.3H1704Q1700 157.3 1700 153Z" fill="#f5a623"/><path d="M1703 157L1706 145H1724L1722 150Z" fill="#232323" opacity="0"/><path d="M1702.5 145.5H1723" stroke="#232323" stroke-width="1.5"/><path d="M1700.5 187.5A10.5 10.5 0 0 1 1719.5 184.5M1721 194A10.5 10.5 0 0 1 1702 197.5" fill="none" stroke="#1e9ff2" stroke-width="2.4"/><path d="M1697 189L1700.5 183.5L1704 189Z M1724.5 192L1721 197.5L1717.5 192Z" fill="#1e9ff2"/><path d="M1711 186.5V195M1707 190.5H1715" stroke="#1e9ff2" stroke-width="1.5"/><path d="M1705 233.3H1722.5V241.5M1700.8 237V245H1719" fill="none" stroke="#e0202c" stroke-width="2.4"/><path d="M1708.5 229.5L1704 233.3L1708.5 237.2M1716 241L1720.5 245L1716 249" fill="none" stroke="#e0202c" stroke-width="2.4"/><path d="M1701.5 277.5H1708.5L1701.5 284.5Z M1722.5 277.5H1715.5L1722.5 284.5Z M1701.5 297H1708.5L1701.5 290Z M1722.5 297H1715.5L1722.5 290Z" fill="#f08c00"/><path d="M1703.5 279.5L1709 285M1720.5 279.5L1715 285M1703.5 295L1709 289.5M1720.5 295L1715 289.5" stroke="#f08c00" stroke-width="2.6"/><rect x="1700.5" y="320.5" width="18" height="16" rx="4" fill="none" stroke="#1e9ff2" stroke-width="2.2"/><path d="M1705 329Q1705 325 1709 325H1719Q1723 325 1723 329V337L1718 342H1709Q1705 342 1705 338Z" fill="#1e9ff2"/><path d="M1723 336.5L1717.5 342V337.5Q1717.5 336.5 1718.5 336.5Z" fill="#232323"/><rect x="1701" y="363.5" width="22" height="22" rx="4" fill="#ffffff"/><path d="M1711.5 408L1722.8 414V426L1711.5 431.5L1700 426V414Z" fill="#e0357e"/><path d="M1700 414L1711.5 420L1722.8 414M1711.5 420V431.5" fill="none" stroke="#f27ab0" stroke-width="1.2"/><rect x="1701" y="451" width="21" height="23" rx="4" fill="#f2f2f2"/><rect x="1712" y="454" width="7.5" height="17" fill="#232323"/><path d="M1701 498.5H1715M1704 504H1722.8M1708 510H1722.8" stroke="#e0101a" stroke-width="2.6"/><circle cx="1703.5" cy="541" r="3" fill="none" stroke="#e85a7a" stroke-width="2"/><circle cx="1719" cy="554.5" r="3" fill="none" stroke="#e85a7a" stroke-width="2"/><path d="M1706.5 541H1712Q1711 548 1716 554.5M1712 541Q1717 548 1720 550" fill="none" stroke="#e85a7a" stroke-width="2"/><rect x="1700" y="580" width="23" height="22" rx="4" fill="#5cc8a8"/><path d="M1706 596L1707 591L1716 582L1720 586L1711 595Z" fill="#232323"/><path d="M1707.5 592L1716 583.5L1718.5 586L1710 594.5Z" fill="#5cc8a8"/><path d="M1701 623.5V646M1707 628H1713M1707 634H1720M1707 640H1716M1707 645H1722.8" stroke="#22c060" stroke-width="2.8" stroke-linecap="round"/><path d="M1700 676L1723 667L1715 688L1711 680Z" fill="#f5a623" stroke="#f5a623" stroke-linejoin="round" stroke-width="2"/><path d="M1704 727V715Q1704 710 1708 710Q1712 710 1712 715V727" fill="none" stroke="#fff" stroke-width="2.2"/><circle cx="1708" cy="727" r="4" fill="none" stroke="#fff" stroke-width="2.2"/><path d="M1716 713H1722V723H1716Z" fill="none" stroke="#fff" stroke-width="2"/></svg>
<div style="left:1733px;top:88px;width:187px;height:543px;background:#232323;"></div>
<div class="t" style="left:1749.4px;top:98.00px;font-size:15px;line-height:15px;color:#b8b8b8;transform:scaleX(0.8817);transform-origin:0 0;">Effects &amp; Presets</div>
<svg style="left:1866px;top:102px" width="11" height="9"><path d="M0 1h11M0 4.5h11M0 8h11" stroke="#b0b0b0" stroke-width="1.6"/></svg>
<div style="left:1740px;top:126.7px;width:173px;height:22.4px;background:#171717;border:1px solid #2a2a2a;box-sizing:border-box;border-radius:3px;"></div>
<svg style="left:1747px;top:130px" width="26" height="18"><circle cx="9" cy="6.5" r="4.3" fill="none" stroke="#c0c0c0" stroke-width="1.3"/><path d="M6 9.5L2 14" stroke="#c0c0c0" stroke-width="1.5"/><path d="M14.5 10h6l-3 3z" fill="#c0c0c0"/></svg>
<div style="left:1735px;top:152.5px;width:183px;height:2px;background:#141414;"></div>
<div style="left:1735px;top:154.5px;width:162.5px;height:456px;overflow:hidden;">
<div style="position:absolute;left:0;top:0.00px;width:163px;height:20px;background:#262626"></div><div style="position:absolute;left:0;top:20.00px;width:163px;height:1.25px;background:#212121"></div><svg style="position:absolute;left:6px;top:5.50px" width="7" height="11"><path d="M1 1L5 5L1 9" fill="none" stroke="#9a9a9a" stroke-width="1.1"/></svg><div class="t" style="position:absolute;left:19.3px;top:2.80px;font-size:15px;line-height:15px;color:#b8b8b8;transform:scaleX(0.9312);transform-origin:0 0;">* Animation Presets</div><div style="position:absolute;left:0;top:21.25px;width:163px;height:20px;background:#262626"></div><div style="position:absolute;left:0;top:41.25px;width:163px;height:1.25px;background:#212121"></div><svg style="position:absolute;left:6px;top:26.75px" width="7" height="11"><path d="M1 1L5 5L1 9" fill="none" stroke="#9a9a9a" stroke-width="1.1"/></svg><div class="t" style="position:absolute;left:19.3px;top:24.05px;font-size:15px;line-height:15px;color:#b8b8b8;transform:scaleX(0.8950);transform-origin:0 0;">3D Channel</div><div style="position:absolute;left:0;top:42.50px;width:163px;height:20px;background:#262626"></div><div style="position:absolute;left:0;top:62.50px;width:163px;height:1.25px;background:#212121"></div><svg style="position:absolute;left:6px;top:48.00px" width="7" height="11"><path d="M1 1L5 5L1 9" fill="none" stroke="#9a9a9a" stroke-width="1.1"/></svg><div class="t" style="position:absolute;left:19.3px;top:45.30px;font-size:15px;line-height:15px;color:#b8b8b8;transform:scaleX(0.9357);transform-origin:0 0;">Audio</div><div style="position:absolute;left:0;top:63.75px;width:163px;height:20px;background:#262626"></div><div style="position:absolute;left:0;top:83.75px;width:163px;height:1.25px;background:#212121"></div><svg style="position:absolute;left:6px;top:69.25px" width="7" height="11"><path d="M1 1L5 5L1 9" fill="none" stroke="#9a9a9a" stroke-width="1.1"/></svg><div class="t" style="position:absolute;left:19.3px;top:66.55px;font-size:15px;line-height:15px;color:#b8b8b8;transform:scaleX(0.9024);transform-origin:0 0;">Blur &amp; Sharpen</div><div style="position:absolute;left:0;top:85.00px;width:163px;height:20px;background:#262626"></div><div style="position:absolute;left:0;top:105.00px;width:163px;height:1.25px;background:#212121"></div><svg style="position:absolute;left:6px;top:90.50px" width="7" height="11"><path d="M1 1L5 5L1 9" fill="none" stroke="#9a9a9a" stroke-width="1.1"/></svg><div class="t" style="position:absolute;left:19.3px;top:87.80px;font-size:15px;line-height:15px;color:#b8b8b8;transform:scaleX(0.8828);transform-origin:0 0;">Boris FX Mocha</div><div style="position:absolute;left:0;top:106.25px;width:163px;height:20px;background:#262626"></div><div style="position:absolute;left:0;top:126.25px;width:163px;height:1.25px;background:#212121"></div><svg style="position:absolute;left:6px;top:111.75px" width="7" height="11"><path d="M1 1L5 5L1 9" fill="none" stroke="#9a9a9a" stroke-width="1.1"/></svg><div class="t" style="position:absolute;left:19.3px;top:109.05px;font-size:15px;line-height:15px;color:#b8b8b8;transform:scaleX(0.8876);transform-origin:0 0;">Channel</div><div style="position:absolute;left:0;top:127.50px;width:163px;height:20px;background:#262626"></div><div style="position:absolute;left:0;top:147.50px;width:163px;height:1.25px;background:#212121"></div><svg style="position:absolute;left:6px;top:133.00px" width="7" height="11"><path d="M1 1L5 5L1 9" fill="none" stroke="#9a9a9a" stroke-width="1.1"/></svg><div class="t" style="position:absolute;left:19.3px;top:130.30px;font-size:15px;line-height:15px;color:#b8b8b8;transform:scaleX(0.8831);transform-origin:0 0;">CINEMA 4D</div><div style="position:absolute;left:0;top:148.75px;width:163px;height:20px;background:#262626"></div><div style="position:absolute;left:0;top:168.75px;width:163px;height:1.25px;background:#212121"></div><svg style="position:absolute;left:6px;top:154.25px" width="7" height="11"><path d="M1 1L5 5L1 9" fill="none" stroke="#9a9a9a" stroke-width="1.1"/></svg><div class="t" style="position:absolute;left:19.3px;top:151.55px;font-size:15px;line-height:15px;color:#b8b8b8;transform:scaleX(0.9157);transform-origin:0 0;">Color Correction</div><div style="position:absolute;left:0;top:170.00px;width:163px;height:20px;background:#262626"></div><div style="position:absolute;left:0;top:190.00px;width:163px;height:1.25px;background:#212121"></div><svg style="position:absolute;left:6px;top:175.50px" width="7" height="11"><path d="M1 1L5 5L1 9" fill="none" stroke="#9a9a9a" stroke-width="1.1"/></svg><div class="t" style="position:absolute;left:19.3px;top:172.80px;font-size:15px;line-height:15px;color:#b8b8b8;transform:scaleX(0.9622);transform-origin:0 0;">Distort</div><div style="position:absolute;left:0;top:191.25px;width:163px;height:20px;background:#262626"></div><div style="position:absolute;left:0;top:211.25px;width:163px;height:1.25px;background:#212121"></div><svg style="position:absolute;left:6px;top:196.75px" width="7" height="11"><path d="M1 1L5 5L1 9" fill="none" stroke="#9a9a9a" stroke-width="1.1"/></svg><div class="t" style="position:absolute;left:19.3px;top:194.05px;font-size:15px;line-height:15px;color:#b8b8b8;transform:scaleX(0.9082);transform-origin:0 0;">Expression Controls</div><div style="position:absolute;left:0;top:212.50px;width:163px;height:20px;background:#262626"></div><div style="position:absolute;left:0;top:232.50px;width:163px;height:1.25px;background:#212121"></div><svg style="position:absolute;left:6px;top:218.00px" width="7" height="11"><path d="M1 1L5 5L1 9" fill="none" stroke="#9a9a9a" stroke-width="1.1"/></svg><div class="t" style="position:absolute;left:19.3px;top:215.30px;font-size:15px;line-height:15px;color:#b8b8b8;transform:scaleX(0.8714);transform-origin:0 0;">Generate</div><div style="position:absolute;left:0;top:233.75px;width:163px;height:20px;background:#262626"></div><div style="position:absolute;left:0;top:253.75px;width:163px;height:1.25px;background:#212121"></div><svg style="position:absolute;left:6px;top:239.25px" width="7" height="11"><path d="M1 1L5 5L1 9" fill="none" stroke="#9a9a9a" stroke-width="1.1"/></svg><div class="t" style="position:absolute;left:19.3px;top:236.55px;font-size:15px;line-height:15px;color:#b8b8b8;transform:scaleX(0.9306);transform-origin:0 0;">Immersive Video</div><div style="position:absolute;left:0;top:255.00px;width:163px;height:20px;background:#262626"></div><div style="position:absolute;left:0;top:275.00px;width:163px;height:1.25px;background:#212121"></div><svg style="position:absolute;left:6px;top:260.50px" width="7" height="11"><path d="M1 1L5 5L1 9" fill="none" stroke="#9a9a9a" stroke-width="1.1"/></svg><div class="t" style="position:absolute;left:19.3px;top:257.80px;font-size:15px;line-height:15px;color:#b8b8b8;transform:scaleX(0.8983);transform-origin:0 0;">Keying</div><div style="position:absolute;left:0;top:276.25px;width:163px;height:20px;background:#262626"></div><div style="position:absolute;left:0;top:296.25px;width:163px;height:1.25px;background:#212121"></div><svg style="position:absolute;left:6px;top:281.75px" width="7" height="11"><path d="M1 1L5 5L1 9" fill="none" stroke="#9a9a9a" stroke-width="1.1"/></svg><div class="t" style="position:absolute;left:19.3px;top:279.05px;font-size:15px;line-height:15px;color:#b8b8b8;transform:scaleX(0.9676);transform-origin:0 0;">Matte</div><div style="position:absolute;left:0;top:297.50px;width:163px;height:20px;background:#262626"></div><div style="position:absolute;left:0;top:317.50px;width:163px;height:1.25px;background:#212121"></div><svg style="position:absolute;left:6px;top:303.00px" width="7" height="11"><path d="M1 1L5 5L1 9" fill="none" stroke="#9a9a9a" stroke-width="1.1"/></svg><div class="t" style="position:absolute;left:19.3px;top:300.30px;font-size:15px;line-height:15px;color:#b8b8b8;transform:scaleX(0.9362);transform-origin:0 0;">Missing</div><div style="position:absolute;left:0;top:318.75px;width:163px;height:20px;background:#262626"></div><div style="position:absolute;left:0;top:338.75px;width:163px;height:1.25px;background:#212121"></div><svg style="position:absolute;left:6px;top:324.25px" width="7" height="11"><path d="M1 1L5 5L1 9" fill="none" stroke="#9a9a9a" stroke-width="1.1"/></svg><div class="t" style="position:absolute;left:19.3px;top:321.55px;font-size:15px;line-height:15px;color:#b8b8b8;transform:scaleX(0.9157);transform-origin:0 0;">Noise &amp; Grain</div><div style="position:absolute;left:0;top:340.00px;width:163px;height:20px;background:#262626"></div><div style="position:absolute;left:0;top:360.00px;width:163px;height:1.25px;background:#212121"></div><svg style="position:absolute;left:6px;top:345.50px" width="7" height="11"><path d="M1 1L5 5L1 9" fill="none" stroke="#9a9a9a" stroke-width="1.1"/></svg><div class="t" style="position:absolute;left:19.3px;top:342.80px;font-size:15px;line-height:15px;color:#b8b8b8;transform:scaleX(0.9178);transform-origin:0 0;">Obsolete</div><div style="position:absolute;left:0;top:361.25px;width:163px;height:20px;background:#262626"></div><div style="position:absolute;left:0;top:381.25px;width:163px;height:1.25px;background:#212121"></div><svg style="position:absolute;left:6px;top:366.75px" width="7" height="11"><path d="M1 1L5 5L1 9" fill="none" stroke="#9a9a9a" stroke-width="1.1"/></svg><div class="t" style="position:absolute;left:19.3px;top:364.05px;font-size:15px;line-height:15px;color:#b8b8b8;transform:scaleX(0.8970);transform-origin:0 0;">Perspective</div><div style="position:absolute;left:0;top:382.50px;width:163px;height:20px;background:#262626"></div><div style="position:absolute;left:0;top:402.50px;width:163px;height:1.25px;background:#212121"></div><svg style="position:absolute;left:6px;top:388.00px" width="7" height="11"><path d="M1 1L5 5L1 9" fill="none" stroke="#9a9a9a" stroke-width="1.1"/></svg><div class="t" style="position:absolute;left:19.3px;top:385.30px;font-size:15px;line-height:15px;color:#b8b8b8;transform:scaleX(0.9414);transform-origin:0 0;">Plugin Everything</div><div style="position:absolute;left:0;top:403.75px;width:163px;height:20px;background:#262626"></div><div style="position:absolute;left:0;top:423.75px;width:163px;height:1.25px;background:#212121"></div><svg style="position:absolute;left:6px;top:409.25px" width="7" height="11"><path d="M1 1L5 5L1 9" fill="none" stroke="#9a9a9a" stroke-width="1.1"/></svg><div class="t" style="position:absolute;left:19.3px;top:406.55px;font-size:15px;line-height:15px;color:#b8b8b8;transform:scaleX(0.9481);transform-origin:0 0;">Simulation</div><div style="position:absolute;left:0;top:425.00px;width:163px;height:20px;background:#262626"></div><div style="position:absolute;left:0;top:445.00px;width:163px;height:1.25px;background:#212121"></div><svg style="position:absolute;left:6px;top:430.50px" width="7" height="11"><path d="M1 1L5 5L1 9" fill="none" stroke="#9a9a9a" stroke-width="1.1"/></svg><div class="t" style="position:absolute;left:19.3px;top:427.80px;font-size:15px;line-height:15px;color:#b8b8b8;transform:scaleX(0.9099);transform-origin:0 0;">Stylize</div><div style="position:absolute;left:0;top:446.25px;width:163px;height:20px;background:#262626"></div><div style="position:absolute;left:0;top:466.25px;width:163px;height:1.25px;background:#212121"></div><svg style="position:absolute;left:6px;top:451.75px" width="7" height="11"><path d="M1 1L5 5L1 9" fill="none" stroke="#9a9a9a" stroke-width="1.1"/></svg><div class="t" style="position:absolute;left:19.3px;top:449.05px;font-size:15px;line-height:15px;color:#b8b8b8;transform:scaleX(1.0178);transform-origin:0 0;">Text</div></div>
<div style="left:1897.5px;top:154.5px;width:21px;height:455px;background:#1f1f1f;"></div>
<div style="left:1899px;top:155px;width:19px;height:373px;background:#2c2c2c;border-radius:9px;"></div>
<div style="left:1735px;top:609.5px;width:162px;height:1.6px;background:#111;"></div>
<div style="left:1896.5px;top:610px;width:1.2px;height:21px;background:#111;"></div>
<svg style="left:1873px;top:613px" width="17" height="16"><path d="M0.5 0.5H16.5V15.5H6L0.5 10Z" fill="#b8b8b8"/><path d="M0.5 10L6 10L6 15.5Z" fill="#7a7a7a"/></svg>
<div style="left:1733px;top:637px;width:187px;height:97px;background:#232323;"></div>
<div class="t" style="left:1749.5px;top:655.30px;font-size:15px;line-height:15px;color:#b8b8b8;transform:scaleX(0.8158);transform-origin:0 0;">Kease</div>
<svg style="left:1800px;top:659px" width="10" height="9"><path d="M0 1h10M0 4.5h10M0 8h10" stroke="#b0b0b0" stroke-width="1.6"/></svg>
<div style="left:1734px;top:686.6px;width:184px;height:18.1px;background:#30b88e;overflow:hidden;"><div class="t" style="position:absolute;left:41.8px;top:6.5px;font-size:15px;line-height:15px;color:#fff;transform:scaleX(0.91);transform-origin:0 0;">Update available&nbsp; X</div></div>
<div style="left:1685px;top:740px;width:235px;height:289px;background:#232323;"></div>
<div class="t" style="left:1701.3px;top:750.50px;font-size:15px;line-height:15px;color:#b8b8b8;transform:scaleX(0.9505);transform-origin:0 0;">Motion Tools Panel 2</div>
<svg style="left:1844px;top:754px" width="11" height="10"><path d="M0 1h11M0 5h11M0 9h11" stroke="#b0b0b0" stroke-width="1.6"/></svg>
<div class="t" style="left:1696.4px;top:788.50px;font-size:15px;line-height:15px;color:#ffffff;font-weight:bold;transform:scaleX(0.9805);transform-origin:0 0;">MOTION TOOLS</div>
<div class="t" style="left:1696.4px;top:811.50px;font-size:15px;line-height:15px;color:#ffffff;font-weight:bold;transform:scaleX(0.9720);transform-origin:0 0;">LAYOUT</div>
<svg style="left:1880px;top:804px" width="16" height="9"><path d="M0.5 0.5H15.5L8 8.5Z" fill="#fff"/></svg>
<svg style="left:1695px;top:832px" width="120" height="30"><path d="M4 13A7.5 7.5 0 0 1 18 10M19 17A7.5 7.5 0 0 1 5 20" fill="none" stroke="#fff" stroke-width="2.2"/><path d="M15 5.5L21 10.5L14 12Z M8 24.5L2 19.5L9 18Z" fill="#fff"/><path d="M34 23Q36 21 36 15Q36 8 42 7Q48 8 48 15Q48 21 50 23Z" fill="#fff"/><circle cx="42" cy="4.5" r="2" fill="#fff"/><path d="M39 24.5Q42 28 45 24.5Z" fill="#fff"/><circle cx="53.8" cy="26" r="5" fill="#e82c2c"/><path d="M61 26L62 20L79 3Q81.5 2 83 4Q84 6 82 8L65 25Z" fill="#fff"/><path d="M62 20L65 25" stroke="#232323" stroke-width="1.2"/><g transform="translate(102.5 14)"><circle r="8" fill="#fff"/><rect x="-3" y="-12.5" width="6" height="6" fill="#fff" transform="rotate(0)"/><rect x="-3" y="-12.5" width="6" height="6" fill="#fff" transform="rotate(45)"/><rect x="-3" y="-12.5" width="6" height="6" fill="#fff" transform="rotate(90)"/><rect x="-3" y="-12.5" width="6" height="6" fill="#fff" transform="rotate(135)"/><rect x="-3" y="-12.5" width="6" height="6" fill="#fff" transform="rotate(180)"/><rect x="-3" y="-12.5" width="6" height="6" fill="#fff" transform="rotate(225)"/><rect x="-3" y="-12.5" width="6" height="6" fill="#fff" transform="rotate(270)"/><rect x="-3" y="-12.5" width="6" height="6" fill="#fff" transform="rotate(315)"/><circle r="4.2" fill="#232323"/></g></svg>
<div style="left:1697px;top:869.7px;width:151px;height:157px;border:1px solid #2d2d2d;box-sizing:border-box;border-radius:5px;background:#212121"></div>
<div style="left:1735px;top:897.3px;width:57px;height:2.2px;background:#5a5a5a;"></div>
<div style="left:1727.7px;top:890.5999999999999px;width:15.4px;height:15.4px;border-radius:50%;background:#dedede"></div>
<div class="t" style="left:1812.5px;top:891.90px;font-size:15px;line-height:15px;color:#ffffff;font-weight:bold;transform:scaleX(1.1387);transform-origin:0 0;">0</div>
<div style="left:1735px;top:930.1px;width:57px;height:2.2px;background:#5a5a5a;"></div>
<div style="left:1727.7px;top:923.4px;width:15.4px;height:15.4px;border-radius:50%;background:#dedede"></div>
<div class="t" style="left:1812.5px;top:924.70px;font-size:15px;line-height:15px;color:#ffffff;font-weight:bold;transform:scaleX(1.1387);transform-origin:0 0;">0</div>
<div style="left:1735px;top:963.4px;width:57px;height:2.2px;background:#5a5a5a;"></div>
<div style="left:1727.7px;top:956.6999999999999px;width:15.4px;height:15.4px;border-radius:50%;background:#dedede"></div>
<div class="t" style="left:1812.5px;top:958.00px;font-size:15px;line-height:15px;color:#ffffff;font-weight:bold;transform:scaleX(1.1387);transform-origin:0 0;">0</div>
<svg style="left:1718px;top:994px" width="110" height="22"><path d="M11 1.5L20.5 11L11 20.5L1.5 11Z" fill="#f27d7d"/><rect x="44" y="1.3" width="20" height="19" fill="#f27d7d"/><circle cx="97" cy="11" r="9.6" fill="#f27d7d"/></svg>
<div style="left:1857.5px;top:869.7px;width:80px;height:73.7px;border:1px solid #2d2d2d;box-sizing:border-box;border-radius:5px;background:#212121"></div>
<div style="left:1857.5px;top:952.4px;width:80px;height:73px;border:1px solid #2d2d2d;box-sizing:border-box;border-radius:5px;background:#212121"></div>
<svg style="left:1870px;top:893px" width="45" height="28"><path d="M7 1.5L12 6.5L7 11.5L2 6.5Z" fill="#f27d7d"/><path d="M28.5 2L33 6.5L28.5 11L24 6.5Z" fill="none" stroke="#fff" stroke-width="1.3"/><path d="M15 16.5L20 21.5L15 26.5L10 21.5Z" fill="#f27d7d"/><path d="M37 17L41.5 21.5L37 26L32.5 21.5Z" fill="#fff" fill-opacity="0" stroke="#fff" stroke-width="1.3"/></svg>
<svg style="left:1870px;top:966px" width="45" height="47"><path d="M11 1V35H43M1 11H33V45" fill="none" stroke="#fff" stroke-width="5"/></svg>
<div style="left:2px;top:740px;width:1677px;height:289px;background:#232323;"></div>
<svg style="left:14px;top:754px" width="8" height="8"><path d="M1 1L7 7M7 1L1 7" stroke="#a8a8a8" stroke-width="1.2"/></svg>
<div style="left:33.7px;top:751.2px;width:12px;height:11.3px;background:#a39474;"></div>
<div class="t" style="left:61.1px;top:750.10px;font-size:15px;line-height:15px;color:#c8c8c8;transform:scaleX(0.9392);transform-origin:0 0;">Parsel animatio Output</div>
<svg style="left:218px;top:754px" width="10" height="9"><path d="M0 1h10M0 4.5h10M0 8h10" stroke="#b0b0b0" stroke-width="1.6"/></svg>
<div style="left:15px;top:770px;width:213px;height:2.2px;background:#d0d0d0;"></div>
<div style="left:273px;top:751.2px;width:12.7px;height:11.3px;background:#a39474;"></div>
<div class="t" style="left:301px;top:750.10px;font-size:15px;line-height:15px;color:#9a9a9a;transform:scaleX(0.9957);transform-origin:0 0;">All</div>
<div style="left:387px;top:751.2px;width:13px;height:11.3px;background:#a39474;"></div>
<div class="t" style="left:414.3px;top:750.10px;font-size:15px;line-height:15px;color:#9a9a9a;transform:scaleX(0.9217);transform-origin:0 0;">Map and baike</div>
<div class="t" style="left:20.6px;top:779.42px;font-size:19px;line-height:19px;color:#2d8ceb;font-weight:bold;transform:scaleX(0.9800);transform-origin:0 0;">0:00:05:00</div>
<div class="t" style="left:15px;top:802.10px;font-size:13px;line-height:13px;color:#2a6db5;transform:scaleX(0.9489);transform-origin:0 0;">00150 (30.00 fps)</div>
<div style="left:134.2px;top:784.2px;width:323.2px;height:24.4px;background:#161616;border:1px solid #262626;box-sizing:border-box;border-radius:3px;"></div>
<svg style="left:141px;top:788px" width="26" height="18"><circle cx="9" cy="6.5" r="4.3" fill="none" stroke="#c0c0c0" stroke-width="1.3"/><path d="M6 9.5L2 14" stroke="#c0c0c0" stroke-width="1.5"/><path d="M14.5 10h6l-3 3z" fill="#c0c0c0"/></svg>
<svg style="left:470px;top:782px" width="230" height="30" viewBox="470 785 230 30"><path d="M477 790.5H487M482 790.5V800M482 795.5H492M482 800H492M490 802V805" stroke="#b0b0b0" stroke-width="1.6" fill="none"/><rect x="477" y="788.5" width="5" height="4" fill="#b0b0b0"/><rect x="489" y="793.5" width="4" height="4" fill="#b0b0b0"/><path d="M494 804H500L497 807Z" fill="#b0b0b0"/><path d="M527 798L533 795L539 798V805L533 808L527 805Z M527 798L533 801L539 798M533 801V808" fill="none" stroke="#b0b0b0" stroke-width="1.4"/><path d="M523 788L524 792L527.5 790L525 793.5L528 796L524 795L523 799L522 795L518 796L521 793.5L518.5 790L522 792Z" fill="#b0b0b0"/><path d="M562.5 803H583V807H562.5Z" fill="#b0b0b0"/><path d="M565 801Q565 793 572.5 793Q580 793 580 801Z" fill="#b0b0b0"/><path d="M572.5 795V802" stroke="#232323" stroke-width="1.6"/><path d="M569 798L572.5 794.5L576 798" fill="none" stroke="#232323" stroke-width="1.4"/><rect x="600" y="791" width="15" height="16" fill="#b0b0b0"/><rect x="603" y="793.5" width="9" height="11" fill="#232323"/><path d="M596 795V810H611" fill="none" stroke="#b0b0b0" stroke-width="1.6"/><rect x="600.5" y="792.0" width="1.6" height="1.6" fill="#232323"/><rect x="612.8" y="792.0" width="1.6" height="1.6" fill="#232323"/><rect x="600.5" y="795.7" width="1.6" height="1.6" fill="#232323"/><rect x="612.8" y="795.7" width="1.6" height="1.6" fill="#232323"/><rect x="600.5" y="799.4" width="1.6" height="1.6" fill="#232323"/><rect x="612.8" y="799.4" width="1.6" height="1.6" fill="#232323"/><rect x="600.5" y="803.1" width="1.6" height="1.6" fill="#232323"/><rect x="612.8" y="803.1" width="1.6" height="1.6" fill="#232323"/><circle cx="636.5" cy="801.5" r="6" fill="none" stroke="#2d8ceb" stroke-width="1.6"/><circle cx="639" cy="799" r="6" fill="#232323" stroke="#2d8ceb" stroke-width="1.6"/><circle cx="641.5" cy="796.5" r="5.5" fill="#1f5a9e" stroke="#2d8ceb" stroke-width="1.6"/><rect x="670" y="792" width="21" height="16.5" fill="none" stroke="#b0b0b0" stroke-width="1.6"/><path d="M673 794V789.5M677 794V789.5M681 794V789.5M685 794V789.5" stroke="#b0b0b0" stroke-width="1.3"/><path d="M672.5 797.5L679 797.5L686 806" fill="none" stroke="#b0b0b0" stroke-width="1.5"/></svg>
<div style="left:2px;top:818.5px;width:708px;height:1.5px;background:#0e0e0e;"></div>
<div style="left:2px;top:820px;width:708px;height:23px;background:#303030;"></div>
<svg style="left:5px;top:825px" width="130" height="16" viewBox="5 825 130 16"><path d="M9 832.5Q16 825 23 832.5Q16 840 9 832.5Z" fill="#a0a0a0"/><circle cx="16" cy="832.5" r="2.3" fill="#303030"/><path d="M27 830H30L34 826.5V838.5L30 835H27Z" fill="#a0a0a0"/><path d="M36.5 829.5Q39 832.5 36.5 835.5M39 827.5Q43 832.5 39 837.5" fill="none" stroke="#a0a0a0" stroke-width="1.2"/><circle cx="53.5" cy="832.5" r="4" fill="#a0a0a0"/><path d="M69 831V829Q69 825.8 72.7 825.8Q76.4 825.8 76.4 829V831" fill="none" stroke="#a0a0a0" stroke-width="1.6"/><rect x="67" y="831" width="11.5" height="8" rx="1" fill="#a0a0a0"/><rect x="86" y="826" width="1" height="14" fill="#111"/><path d="M103.5 826.5H111L119 834.5L112 841.5L103.5 833.5Z" fill="#a0a0a0"/><circle cx="107.5" cy="830.5" r="1.5" fill="#303030"/><rect x="126.5" y="826" width="1" height="14" fill="#161616"/></svg>
<div class="t" style="left:134.2px;top:826.54px;font-size:12px;line-height:12px;color:#a0a0a0;transform:scaleX(0.7941);transform-origin:0 0;">#</div>
<div style="left:166.9px;top:826px;width:1px;height:14px;background:#161616;"></div>
<div class="t" style="left:175.5px;top:826.54px;font-size:12px;line-height:12px;color:#a0a0a0;transform:scaleX(0.9179);transform-origin:0 0;">Layer Name</div>
<div style="left:330px;top:826px;width:1px;height:14px;background:#161616;"></div>
<div class="t" style="left:336.7px;top:826.54px;font-size:12px;line-height:12px;color:#a0a0a0;transform:scaleX(0.9261);transform-origin:0 0;">Mode</div>
<div class="t" style="left:432px;top:826.54px;font-size:12px;line-height:12px;color:#a0a0a0;transform:scaleX(0.8185);transform-origin:0 0;">T</div>
<div class="t" style="left:453.7px;top:826.54px;font-size:12px;line-height:12px;color:#a0a0a0;transform:scaleX(0.9651);transform-origin:0 0;">TrkMat</div>
<div style="left:538px;top:826px;width:1px;height:14px;background:#161616;"></div>
<div class="t" style="left:544.8px;top:826.54px;font-size:12px;line-height:12px;color:#a0a0a0;transform:scaleX(0.9467);transform-origin:0 0;">Parent &amp; Link</div>
<div style="left:690px;top:826px;width:1px;height:14px;background:#161616;"></div>
<div style="left:2px;top:842.8px;width:708px;height:1.3px;background:#111111;"></div>
<div style="left:2px;top:844px;width:708px;height:21px;background:#323232;"></div>
<div style="left:2px;top:864px;width:708px;height:1.5px;background:#2a2a2a;"></div>
<svg style="left:8px;top:847.5px" width="16" height="12"><path d="M1 6Q8 -1.5 15 6Q8 13.5 1 6Z" fill="#c8c8c8"/><circle cx="8" cy="6" r="2.3" fill="#2a2a2a"/></svg>
<div style="left:45px;top:845.5px;width:15.7px;height:18px;background:#1f1f1f;"></div>
<div style="left:63.7px;top:845.5px;width:15.8px;height:18px;background:#1f1f1f;"></div>
<svg style="left:93.5px;top:848.5px" width="6" height="10"><path d="M1 1L4.5 5L1 9" fill="none" stroke="#9a9a9a" stroke-width="1.1"/></svg>
<div style="left:108px;top:846.9px;width:15px;height:13.8px;background:#b5a07e;"></div>
<div class="t" style="left:134.5px;top:846.25px;font-size:14px;line-height:14px;color:#c8c8c8;font-weight:bold;transform:scaleX(0.8348);transform-origin:0 0;">1</div>
<svg style="left:169.5px;top:847px" width="21" height="15"><rect x="0.5" y="0.5" width="20" height="14" fill="#cfcfcf"/><rect x="3" y="2.5" width="15" height="10" fill="#3a3a3a"/><rect x="0.8" y="1.5" width="1.6" height="1.8" fill="#3a3a3a"/><rect x="18.6" y="1.5" width="1.6" height="1.8" fill="#3a3a3a"/><rect x="0.8" y="4.7" width="1.6" height="1.8" fill="#3a3a3a"/><rect x="18.6" y="4.7" width="1.6" height="1.8" fill="#3a3a3a"/><rect x="0.8" y="7.9" width="1.6" height="1.8" fill="#3a3a3a"/><rect x="18.6" y="7.9" width="1.6" height="1.8" fill="#3a3a3a"/><rect x="0.8" y="11.100000000000001" width="1.6" height="1.8" fill="#3a3a3a"/><rect x="18.6" y="11.100000000000001" width="1.6" height="1.8" fill="#3a3a3a"/><circle cx="7.5" cy="6" r="2.4" fill="#3d8ff0"/><rect x="9.5" y="5" width="5" height="4.5" fill="#e53030"/><path d="M6 11.5L9 7L12 11.5Z" fill="#25b04a"/></svg>
<div class="t" style="left:195px;top:845.70px;font-size:15px;line-height:15px;color:#c8c8c8;font-weight:bold;transform:scaleX(0.8720);transform-origin:0 0;">Outro</div>
<div style="left:334.5px;top:845.7px;width:85.5px;height:16.2px;background:#1a1a1a;"></div>
<div class="t" style="left:343px;top:845.90px;font-size:15px;line-height:15px;color:#c8c8c8;transform:scaleX(0.9474);transform-origin:0 0;">Normal</div>
<svg style="left:405px;top:850.5px" width="10" height="6"><path d="M1 1L5 5L9 1" fill="none" stroke="#b0b0b0" stroke-width="1.2"/></svg>
<div style="left:427.4px;top:846px;width:15.8px;height:16px;background:#1f1f1f;"></div>
<svg style="left:544px;top:846.0px" width="16" height="16"><path d="M8 8.5A1.8 1.8 0 1 1 10 7A4 4 0 1 1 4.5 4A6.2 6.2 0 1 1 2 9" fill="none" stroke="#b8b8b8" stroke-width="1.3"/></svg>
<div style="left:567px;top:845.7px;width:117.3px;height:16.2px;background:#1a1a1a;"></div>
<div class="t" style="left:575.6px;top:845.90px;font-size:15px;line-height:15px;color:#c8c8c8;transform:scaleX(0.9091);transform-origin:0 0;">None</div>
<svg style="left:669px;top:850.5px" width="10" height="6"><path d="M1 1L5 5L9 1" fill="none" stroke="#b0b0b0" stroke-width="1.2"/></svg>
<div style="left:2px;top:865.5px;width:708px;height:21px;background:#323232;"></div>
<div style="left:2px;top:885.5px;width:708px;height:1.5px;background:#2a2a2a;"></div>
<svg style="left:8px;top:869.0px" width="16" height="12"><path d="M1 6Q8 -1.5 15 6Q8 13.5 1 6Z" fill="#c8c8c8"/><circle cx="8" cy="6" r="2.3" fill="#2a2a2a"/></svg>
<svg style="left:26px;top:868.0px" width="17" height="14"><path d="M1 4.5H4L8 1V13L4 9.5H1Z" fill="#c8c8c8"/><path d="M10.5 4Q13 7 10.5 10M13 2Q17 7 13 12" fill="none" stroke="#c8c8c8" stroke-width="1.2"/></svg>
<div style="left:45px;top:867.0px;width:15.7px;height:18px;background:#1f1f1f;"></div>
<div style="left:63.7px;top:867.0px;width:15.8px;height:18px;background:#1f1f1f;"></div>
<svg style="left:93.5px;top:870.0px" width="6" height="10"><path d="M1 1L4.5 5L1 9" fill="none" stroke="#9a9a9a" stroke-width="1.1"/></svg>
<div style="left:108px;top:868.4px;width:15px;height:13.8px;background:#b5a07e;"></div>
<div class="t" style="left:134.5px;top:867.75px;font-size:14px;line-height:14px;color:#c8c8c8;font-weight:bold;transform:scaleX(0.8348);transform-origin:0 0;">2</div>
<svg style="left:169.5px;top:868.5px" width="21" height="15"><rect x="0.5" y="0.5" width="20" height="14" fill="#cfcfcf"/><rect x="3" y="2.5" width="15" height="10" fill="#3a3a3a"/><rect x="0.8" y="1.5" width="1.6" height="1.8" fill="#3a3a3a"/><rect x="18.6" y="1.5" width="1.6" height="1.8" fill="#3a3a3a"/><rect x="0.8" y="4.7" width="1.6" height="1.8" fill="#3a3a3a"/><rect x="18.6" y="4.7" width="1.6" height="1.8" fill="#3a3a3a"/><rect x="0.8" y="7.9" width="1.6" height="1.8" fill="#3a3a3a"/><rect x="18.6" y="7.9" width="1.6" height="1.8" fill="#3a3a3a"/><rect x="0.8" y="11.100000000000001" width="1.6" height="1.8" fill="#3a3a3a"/><rect x="18.6" y="11.100000000000001" width="1.6" height="1.8" fill="#3a3a3a"/><circle cx="7.5" cy="6" r="2.4" fill="#3d8ff0"/><rect x="9.5" y="5" width="5" height="4.5" fill="#e53030"/><path d="M6 11.5L9 7L12 11.5Z" fill="#25b04a"/></svg>
<div class="t" style="left:195px;top:867.20px;font-size:15px;line-height:15px;color:#c8c8c8;font-weight:bold;transform:scaleX(0.9260);transform-origin:0 0;">[All]</div>
<div style="left:334.5px;top:867.2px;width:85.5px;height:16.2px;background:#1a1a1a;"></div>
<div class="t" style="left:343px;top:867.40px;font-size:15px;line-height:15px;color:#c8c8c8;transform:scaleX(0.9474);transform-origin:0 0;">Normal</div>
<svg style="left:405px;top:872.0px" width="10" height="6"><path d="M1 1L5 5L9 1" fill="none" stroke="#b0b0b0" stroke-width="1.2"/></svg>
<div style="left:427.4px;top:867.5px;width:15.8px;height:16px;background:#1f1f1f;"></div>
<div style="left:450.7px;top:867.2px;width:81px;height:16.2px;background:#1a1a1a;"></div>
<div class="t" style="left:459.3px;top:867.40px;font-size:15px;line-height:15px;color:#c8c8c8;transform:scaleX(0.9119);transform-origin:0 0;">None</div>
<svg style="left:516px;top:872.0px" width="10" height="6"><path d="M1 1L5 5L9 1" fill="none" stroke="#b0b0b0" stroke-width="1.2"/></svg>
<svg style="left:544px;top:867.5px" width="16" height="16"><path d="M8 8.5A1.8 1.8 0 1 1 10 7A4 4 0 1 1 4.5 4A6.2 6.2 0 1 1 2 9" fill="none" stroke="#b8b8b8" stroke-width="1.3"/></svg>
<div style="left:567px;top:867.2px;width:117.3px;height:16.2px;background:#1a1a1a;"></div>
<div class="t" style="left:575.6px;top:867.40px;font-size:15px;line-height:15px;color:#c8c8c8;transform:scaleX(0.9091);transform-origin:0 0;">None</div>
<svg style="left:669px;top:872.0px" width="10" height="6"><path d="M1 1L5 5L9 1" fill="none" stroke="#b0b0b0" stroke-width="1.2"/></svg>
<div style="left:2px;top:887px;width:708px;height:21px;background:#323232;"></div>
<div style="left:2px;top:907px;width:708px;height:1.5px;background:#2a2a2a;"></div>
<svg style="left:8px;top:890.5px" width="16" height="12"><path d="M1 6Q8 -1.5 15 6Q8 13.5 1 6Z" fill="#c8c8c8"/><circle cx="8" cy="6" r="2.3" fill="#2a2a2a"/></svg>
<div style="left:45px;top:888.5px;width:15.7px;height:18px;background:#1f1f1f;"></div>
<div style="left:63.7px;top:888.5px;width:15.8px;height:18px;background:#1f1f1f;"></div>
<svg style="left:66px;top:889.5px" width="13" height="14"><path d="M3 6V4Q3 1 6.5 1Q10 1 10 4V6" fill="none" stroke="#c8c8c8" stroke-width="1.6"/><rect x="1" y="6" width="11" height="7.5" rx="1" fill="#c8c8c8"/></svg>
<svg style="left:93.5px;top:891.5px" width="6" height="10"><path d="M1 1L4.5 5L1 9" fill="none" stroke="#9a9a9a" stroke-width="1.1"/></svg>
<div style="left:108px;top:889.9px;width:15px;height:13.8px;background:#6b80e0;"></div>
<div class="t" style="left:134.5px;top:889.25px;font-size:14px;line-height:14px;color:#c8c8c8;font-weight:bold;transform:scaleX(0.8348);transform-origin:0 0;">3</div>
<svg style="left:171px;top:889px" width="17" height="17"><path d="M8.5 1L10.8 6.2L16.2 6.6L12 10.2L13.3 15.6L8.5 12.7L3.7 15.6L5 10.2L0.8 6.6L6.2 6.2Z" fill="#c8c8c8"/></svg>
<div class="t" style="left:195px;top:888.70px;font-size:15px;line-height:15px;color:#c8c8c8;font-weight:bold;transform:scaleX(0.8994);transform-origin:0 0;">White BG</div>
<div style="left:334.5px;top:888.7px;width:85.5px;height:16.2px;background:#1a1a1a;"></div>
<div class="t" style="left:343px;top:888.90px;font-size:15px;line-height:15px;color:#c8c8c8;transform:scaleX(0.9474);transform-origin:0 0;">Normal</div>
<svg style="left:405px;top:893.5px" width="10" height="6"><path d="M1 1L5 5L9 1" fill="none" stroke="#b0b0b0" stroke-width="1.2"/></svg>
<div style="left:427.4px;top:889px;width:15.8px;height:16px;background:#1f1f1f;"></div>
<div style="left:450.7px;top:888.7px;width:81px;height:16.2px;background:#1a1a1a;"></div>
<div class="t" style="left:459.3px;top:888.90px;font-size:15px;line-height:15px;color:#c8c8c8;transform:scaleX(0.9119);transform-origin:0 0;">None</div>
<svg style="left:516px;top:893.5px" width="10" height="6"><path d="M1 1L5 5L9 1" fill="none" stroke="#b0b0b0" stroke-width="1.2"/></svg>
<svg style="left:544px;top:889.0px" width="16" height="16"><path d="M8 8.5A1.8 1.8 0 1 1 10 7A4 4 0 1 1 4.5 4A6.2 6.2 0 1 1 2 9" fill="none" stroke="#b8b8b8" stroke-width="1.3"/></svg>
<div style="left:567px;top:888.7px;width:117.3px;height:16.2px;background:#1a1a1a;"></div>
<div class="t" style="left:575.6px;top:888.90px;font-size:15px;line-height:15px;color:#c8c8c8;transform:scaleX(0.9091);transform-origin:0 0;">None</div>
<svg style="left:669px;top:893.5px" width="10" height="6"><path d="M1 1L5 5L9 1" fill="none" stroke="#b0b0b0" stroke-width="1.2"/></svg>
<div style="left:710px;top:793px;width:1.6px;height:215px;background:#0e0e0e;"></div>
<div style="left:2px;top:1007.5px;width:708px;height:1px;background:#161616;"></div>
<svg style="left:8px;top:1011px" width="66" height="18"><rect x="1.5" y="5.5" width="10" height="10" fill="none" stroke="#b0b0b0" stroke-width="1.4"/><path d="M5.5 5.5V1.5H15.5V11.5H11.5" fill="none" stroke="#b0b0b0" stroke-width="1.4"/><rect x="5" y="9" width="3" height="3" fill="#b0b0b0"/><rect x="24.5" y="1.5" width="9" height="9" fill="none" stroke="#2d8ceb" stroke-width="1.6"/><circle cx="32" cy="10" r="5.5" fill="none" stroke="#2d8ceb" stroke-width="1.6"/><path d="M52 1.5V15.5M58 1.5V15.5M49 5L52 8.5L49 12M61 5L58 8.5L61 12" fill="none" stroke="#b0b0b0" stroke-width="1.5"/></svg>
<div style="left:333px;top:1010px;width:203px;height:18px;border:1px solid #2c2c2c;border-bottom:none;box-sizing:border-box;border-radius:3px 3px 0 0;"></div>
<div class="t" style="left:357px;top:1012.30px;font-size:15px;line-height:15px;color:#b0b0b0;transform:scaleX(0.9264);transform-origin:0 0;">Toggle Switches / Modes</div>
<div style="left:718px;top:782.9px;width:940px;height:10.3px;background:#686868;"></div>
<div style="left:711.5px;top:782.3px;width:8px;height:11px;background:#2d8ceb;border-radius:6px 0 0 6px;border-right:1px solid #111;box-sizing:border-box"></div>
<div style="left:1652.5px;top:782.5px;width:6px;height:11px;background:#2d8ceb;border-radius:0 4px 4px 0"></div>
<div style="left:1235.5px;top:782.5px;width:1.6px;height:10.5px;background:#2d8ceb;"></div>
<div class="t" style="left:706.5px;top:798.54px;font-size:12px;line-height:12px;color:#a8a8a8;transform:scaleX(0.9197);transform-origin:0 0;">0:00s</div>
<div class="t" style="left:812.4px;top:798.54px;font-size:12px;line-height:12px;color:#a8a8a8;transform:scaleX(1.0078);transform-origin:0 0;">01s</div>
<div class="t" style="left:915.5px;top:798.54px;font-size:12px;line-height:12px;color:#a8a8a8;transform:scaleX(1.0078);transform-origin:0 0;">02s</div>
<div class="t" style="left:1019px;top:798.54px;font-size:12px;line-height:12px;color:#a8a8a8;transform:scaleX(1.0078);transform-origin:0 0;">03s</div>
<div class="t" style="left:1122px;top:798.54px;font-size:12px;line-height:12px;color:#a8a8a8;transform:scaleX(1.0078);transform-origin:0 0;">04s</div>
<div class="t" style="left:1225.5px;top:798.54px;font-size:12px;line-height:12px;color:#a8a8a8;transform:scaleX(1.0078);transform-origin:0 0;">05s</div>
<div class="t" style="left:1328.5px;top:798.54px;font-size:12px;line-height:12px;color:#a8a8a8;transform:scaleX(1.0078);transform-origin:0 0;">06s</div>
<div class="t" style="left:1431.5px;top:798.54px;font-size:12px;line-height:12px;color:#a8a8a8;transform:scaleX(1.0078);transform-origin:0 0;">07s</div>
<div class="t" style="left:1535.5px;top:798.54px;font-size:12px;line-height:12px;color:#a8a8a8;transform:scaleX(1.0078);transform-origin:0 0;">08s</div>
<div class="t" style="left:1638.5px;top:798.54px;font-size:12px;line-height:12px;color:#a8a8a8;transform:scaleX(1.0078);transform-origin:0 0;">09s</div>
<div style="left:700px;top:796px;width:10px;height:15px;background:#232323;"></div>
<div style="left:710px;top:796px;width:1.6px;height:15px;background:#0e0e0e;"></div>
<svg style="left:711px;top:800px" width="960" height="22" viewBox="711 800 960 22"><rect x="719.6" y="811.5" width="1" height="7.5" fill="#8a8a8a"/><rect x="822.9" y="811.5" width="1" height="7.5" fill="#8a8a8a"/><rect x="926.2" y="811.5" width="1" height="7.5" fill="#8a8a8a"/><rect x="1029.5" y="811.5" width="1" height="7.5" fill="#8a8a8a"/><rect x="1132.8" y="811.5" width="1" height="7.5" fill="#8a8a8a"/><rect x="1236.1" y="811.5" width="1" height="7.5" fill="#8a8a8a"/><rect x="1339.4" y="811.5" width="1" height="7.5" fill="#8a8a8a"/><rect x="1442.7" y="811.5" width="1" height="7.5" fill="#8a8a8a"/><rect x="1546.0" y="811.5" width="1" height="7.5" fill="#8a8a8a"/><rect x="1649.3" y="811.5" width="1" height="7.5" fill="#8a8a8a"/><rect x="742.3" y="807" width="1.2" height="1.2" fill="#6a6a6a"/><rect x="845.5999999999999" y="807" width="1.2" height="1.2" fill="#6a6a6a"/><rect x="948.9" y="807" width="1.2" height="1.2" fill="#6a6a6a"/><rect x="1052.1999999999998" y="807" width="1.2" height="1.2" fill="#6a6a6a"/><rect x="1155.5" y="807" width="1.2" height="1.2" fill="#6a6a6a"/><rect x="1258.8" y="807" width="1.2" height="1.2" fill="#6a6a6a"/><rect x="1362.1" y="807" width="1.2" height="1.2" fill="#6a6a6a"/><rect x="1465.4" y="807" width="1.2" height="1.2" fill="#6a6a6a"/><rect x="1568.6999999999998" y="807" width="1.2" height="1.2" fill="#6a6a6a"/></svg>
<div style="left:719px;top:819px;width:940px;height:19px;background:#646464;"></div>
<div style="left:713px;top:819px;width:7px;height:19.5px;background:#2d8ceb;border-radius:7px 0 0 7px"></div>
<div style="left:1652.5px;top:819px;width:6px;height:21px;background:#2d8ceb;border-radius:0 4px 4px 0"></div>
<div style="left:711px;top:838px;width:948px;height:6px;background:#1c1c1c;"></div>
<div style="left:711px;top:838px;width:948px;height:1.5px;background:#111;"></div>
<div style="left:711px;top:843px;width:948px;height:1px;background:#111;"></div>
<svg style="left:1661px;top:820px" width="17" height="19"><path d="M1 1H16V12L8.5 18L1 12Z" fill="#c4c4c4"/></svg>
<div style="left:710.5px;top:842px;width:9px;height:165px;background:#262626;"></div>
<div style="left:719px;top:844.8px;width:929px;height:162px;background:#333333;"></div>
<div style="left:719px;top:844.8px;width:938px;height:19.1px;background:#3a3a3a;"></div>
<div style="left:1493.2px;top:844.8px;width:163.5px;height:19.1px;background:#716553;"></div>
<svg style="left:1493px;top:845px" width="8" height="8"><path d="M0.5 7.5V3Q0.5 0.5 3 0.5H7.5" fill="none" stroke="#b9a889" stroke-width="1"/></svg>
<div style="left:719px;top:865.4px;width:937.7px;height:19.1px;background:#716553;"></div>
<svg style="left:719px;top:866px" width="8" height="8"><path d="M0.5 7.5V3Q0.5 0.5 3 0.5H7.5" fill="none" stroke="#b9a889" stroke-width="1"/></svg>
<div style="left:719px;top:887px;width:937.7px;height:19.7px;background:#525a8e;"></div>
<div style="left:1648px;top:906.7px;width:9px;height:100px;background:#262626;"></div>
<svg style="left:1658px;top:846px" width="20" height="18"><path d="M9 2H18V10H9Z" fill="#c4c4c4"/><path d="M1 9L9 3V13Z" fill="none" stroke="#c4c4c4" stroke-width="1.3"/><circle cx="8" cy="12" r="3.5" fill="#232323" stroke="#c4c4c4" stroke-width="1.3"/></svg>
<div style="left:1235.7px;top:800px;width:1.4px;height:207px;background:#2d8ceb;"></div>
<svg style="left:1230px;top:799px" width="15" height="18"><path d="M1 1H14V8L7.5 17L1 8Z" fill="#2d8ceb"/><path d="M5 8L7.5 12L10 8" fill="none" stroke="#1a4d80" stroke-width="1"/></svg>
<div style="left:1236.5px;top:840px;width:3.5px;height:2.5px;background:#28c040;"></div>
<div style="left:711px;top:1007.5px;width:969px;height:1px;background:#1a1a1a;"></div>
<svg style="left:714px;top:1010px" width="130" height="18"><path d="M4 7L9 3L14 7Z" fill="#c0c0c0"/><path d="M10 8H16" stroke="#c0c0c0"/><circle cx="35" cy="10" r="4.8" fill="none" stroke="#c0c0c0" stroke-width="1.6"/><path d="M40 10H89" stroke="#5a5a5a" stroke-width="1.2"/><path d="M105 10L111 4L115 8L119 4L125 10Z" fill="#c0c0c0"/></svg>
<div style="left:0px;top:1029px;width:1920px;height:51px;background:#222345;"></div>
<svg style="left:0;top:1029px" width="620" height="51" viewBox="0 1029 620 51"><path d="M20 1047.5L28.5 1046.3V1054.5H20Z M29.8 1046.1L40 1044.7V1054.5H29.8Z M20 1055.8H28.5V1064L20 1062.8Z M29.8 1055.8H40V1065.6L29.8 1064.2Z" fill="#fff"/><circle cx="93.5" cy="1051.5" r="6.8" fill="none" stroke="#fff" stroke-width="1.6"/><path d="M88.5 1056.5L80.5 1064.5" stroke="#fff" stroke-width="1.8"/><rect x="248" y="1030.5" width="61.2" height="49.5" fill="#4b4b6b"/><rect x="248" y="1077" width="61.2" height="3" fill="#76b9ed"/><rect x="315.4" y="1077" width="50.3" height="3" fill="#76b9ed"/><rect x="563.2" y="1077" width="51.1" height="3" fill="#76b9ed"/><rect x="140.4" y="1041.4" width="27.3" height="25.5" rx="4" fill="#300000"/><rect x="201.6" y="1041.4" width="28" height="25.5" rx="2" fill="#9999ff"/><rect x="204" y="1043.7" width="23.3" height="21" fill="#1c1240"/><path d="M206 1046L225 1063H206Z" fill="#9999ff"/><rect x="263.2" y="1041.4" width="28.5" height="25.5" rx="4" fill="#00005b"/><path d="M325.6 1044.5Q325.6 1043 327 1043H335L337 1045.5H352Q353.6 1045.5 353.6 1047V1066H325.6Z" fill="#e8a317"/><path d="M325.6 1049H353.6V1066Q353.6 1067.5 352 1067.5H327Q325.6 1067.5 325.6 1066Z" fill="#ffc83d"/><path d="M333 1058H346V1067.5H343V1061H336V1067.5H333Z" fill="#2b7cd3"/></svg>
<div class="t" style="left:142.5px;top:1046.61px;font-size:17px;line-height:17px;color:#ff9a00;font-weight:bold;transform:scaleX(1.2353);transform-origin:0 0;">Ai</div>
<div class="t" style="left:265px;top:1046.61px;font-size:17px;line-height:17px;color:#9999ff;font-weight:bold;transform:scaleX(1.1044);transform-origin:0 0;">Ae</div>
<svg style="left:386.3px;top:1038.7px" width="36" height="36" viewBox="-16 -16 36 36"><path d="M0 0L12.99 -7.50A15 15 0 0 0 -12.99 -7.50Z" fill="#ea4335"/><path d="M0 0L-12.99 -7.50A15 15 0 0 0 0 15Z" fill="#34a853"/><path d="M0 0L0 15A15 15 0 0 0 12.99 -7.50Z" fill="#fbbc04"/><circle r="7" fill="#fff"/><circle r="5.5" fill="#4285f4"/><circle cx="8.5" cy="8.5" r="6.5" fill="#3a3aa0" stroke="#222345" stroke-width="1"/></svg>
<svg style="left:448.2px;top:1038.7px" width="36" height="36" viewBox="-16 -16 36 36"><path d="M0 0L12.99 -7.50A15 15 0 0 0 -12.99 -7.50Z" fill="#ea4335"/><path d="M0 0L-12.99 -7.50A15 15 0 0 0 0 15Z" fill="#34a853"/><path d="M0 0L0 15A15 15 0 0 0 12.99 -7.50Z" fill="#fbbc04"/><circle r="7" fill="#fff"/><circle r="5.5" fill="#4285f4"/><circle cx="8.5" cy="8.5" r="6.5" fill="#4a3a30" stroke="#222345" stroke-width="1"/></svg>
<svg style="left:510.20000000000005px;top:1038.7px" width="36" height="36" viewBox="-16 -16 36 36"><path d="M0 0L12.99 -7.50A15 15 0 0 0 -12.99 -7.50Z" fill="#ea4335"/><path d="M0 0L-12.99 -7.50A15 15 0 0 0 0 15Z" fill="#34a853"/><path d="M0 0L0 15A15 15 0 0 0 12.99 -7.50Z" fill="#fbbc04"/><circle r="7" fill="#fff"/><circle r="5.5" fill="#4285f4"/><circle cx="8.5" cy="8.5" r="6.5" fill="#a060d0" stroke="#222345" stroke-width="1"/></svg>
<svg style="left:572px;top:1039px" width="32" height="32" viewBox="0 0 32 32"><defs><linearGradient id="eg" x1="0" y1="0" x2="1" y2="1"><stop offset="0" stop-color="#35c1f1"/><stop offset="0.6" stop-color="#1da2e0"/><stop offset="1" stop-color="#0c59a4"/></linearGradient></defs><circle cx="16" cy="16" r="15.5" fill="url(#eg)"/><path d="M30 14Q29 4 17 3Q6 3 3 12Q7 7 14 8Q22 9 22 15Q22 19 17 19Q11 19 11 15Q6 19 9 25Q13 31 21 30Q27 28 30 22" fill="#50e6a0" opacity="0.85"/><path d="M11 15Q11 19 17 19Q22 19 22 15Q22 22 14 22Q10 21 11 15Z" fill="#0c3e7a"/></svg>
<svg style="left:1366px;top:1038px" width="36" height="32"><defs><linearGradient id="sg" x1="0" y1="0" x2="0" y2="1"><stop offset="0" stop-color="#ffc83a"/><stop offset="1" stop-color="#f07818"/></linearGradient><linearGradient id="cg" x1="0" y1="0" x2="0" y2="1"><stop offset="0" stop-color="#e8f2fc"/><stop offset="1" stop-color="#98c0e8"/></linearGradient></defs><circle cx="18" cy="17.5" r="12.5" fill="url(#sg)"/><path d="M4 12.5Q2.5 12.5 2.5 10.5Q2.5 8 5.5 8Q6.5 4 10.5 4.5Q14 4.5 15 7.5Q18.5 7.5 18.5 10.5Q18.5 12.5 16.5 12.5Z" fill="url(#cg)"/><path d="M17.5 27.5Q15.5 27.5 15.5 25Q15.5 22.5 18.5 22.5Q19.5 18 24 18.5Q28 18.5 29 22Q33 22 33 25Q33 27.5 30.5 27.5Z" fill="url(#cg)"/><circle cx="27" cy="9" r="7" fill="#d42a20"/></svg>
<div class="t" style="left:1388.5px;top:1043.04px;font-size:10px;line-height:10px;color:#fff;transform:scaleX(0.9889);transform-origin:0 0;">1</div>
<div class="t" style="left:1409.5px;top:1047.56px;font-size:18px;line-height:18px;color:#ffffff;transform:scaleX(0.9150);transform-origin:0 0;">33°C</div>
<div class="t" style="left:1457.8px;top:1047.56px;font-size:18px;line-height:18px;color:#ffffff;transform:scaleX(0.9612);transform-origin:0 0;">Partly sunny</div>
<svg style="left:1572px;top:1048px" width="20" height="14"><path d="M2 11L10 3L18 11" fill="none" stroke="#fff" stroke-width="1.6"/></svg>
<svg style="left:1603px;top:1044px" width="120" height="24" viewBox="1603 1044 120 24"><rect x="1606" y="1050" width="10" height="9" rx="2" fill="none" stroke="#fff" stroke-width="1.3"/><path d="M1616 1052L1620 1050V1059L1616 1057" fill="none" stroke="#fff" stroke-width="1.3"/><path d="M1607 1047Q1612 1044 1617 1047M1607 1062Q1612 1065 1617 1062" fill="none" stroke="#fff" stroke-width="1"/><path d="M1633 1061Q1630 1061 1631 1057Q1632 1054.5 1635 1055Q1637 1050 1642 1051Q1646 1049 1649 1053Q1653 1053 1653 1057Q1653 1061 1649 1061Z" fill="#e8e8f0"/><path d="M1633 1061Q1636 1057 1642 1058Q1648 1056 1653 1060" fill="none" stroke="#b8b8c8" stroke-width="1.5"/><rect x="1665" y="1047" width="18" height="12" fill="none" stroke="#fff" stroke-width="1.2"/><path d="M1674 1059V1063M1669 1063H1679" stroke="#fff" stroke-width="1.2"/><rect x="1661.7" y="1046" width="4" height="5" fill="#222345" stroke="#fff"/><path d="M1663.7 1051V1064" stroke="#fff"/><path d="M1692 1052H1695L1699.5 1048V1062L1695 1058H1692Z" fill="none" stroke="#fff" stroke-width="1.2"/><path d="M1702.5 1052.5Q1704 1055 1702.5 1057.5M1705.5 1050Q1708.5 1055 1705.5 1060M1708.5 1047.5Q1713 1055 1708.5 1062.5" fill="none" stroke="#fff" stroke-width="1"/></svg>
<div class="t" style="left:1725.2px;top:1037.10px;font-size:15px;line-height:15px;color:#fff;transform:scaleX(0.8829);transform-origin:0 0;">ENG</div>
<div class="t" style="left:1723.7px;top:1059.10px;font-size:15px;line-height:15px;color:#fff;transform:scaleX(0.9291);transform-origin:0 0;">INTL</div>
<div class="t" style="left:1778px;top:1037.10px;font-size:15px;line-height:15px;color:#fff;transform:scaleX(0.9329);transform-origin:0 0;">05:29 PM</div>
<div class="t" style="left:1770.5px;top:1059.10px;font-size:15px;line-height:15px;color:#fff;transform:scaleX(0.9937);transform-origin:0 0;">09/10/2023</div>
<svg style="left:1866px;top:1043px" width="40" height="36"><path d="M3 4H24V20H12L7 25V20H3Z" fill="#fff"/><path d="M7 9H20M7 13H20M7 17H16" stroke="#222345" stroke-width="1.2"/><circle cx="22.5" cy="21.5" r="9.5" fill="#222" stroke="#888" stroke-width="1"/></svg>
<div class="t" style="left:1885.5px;top:1060.00px;font-size:13px;line-height:13px;color:#fff;transform:scaleX(0.8298);transform-origin:0 0;">1</div>
<div style="left:1914px;top:1029px;width:1px;height:51px;background:#55557a;"></div>
</body></html>
